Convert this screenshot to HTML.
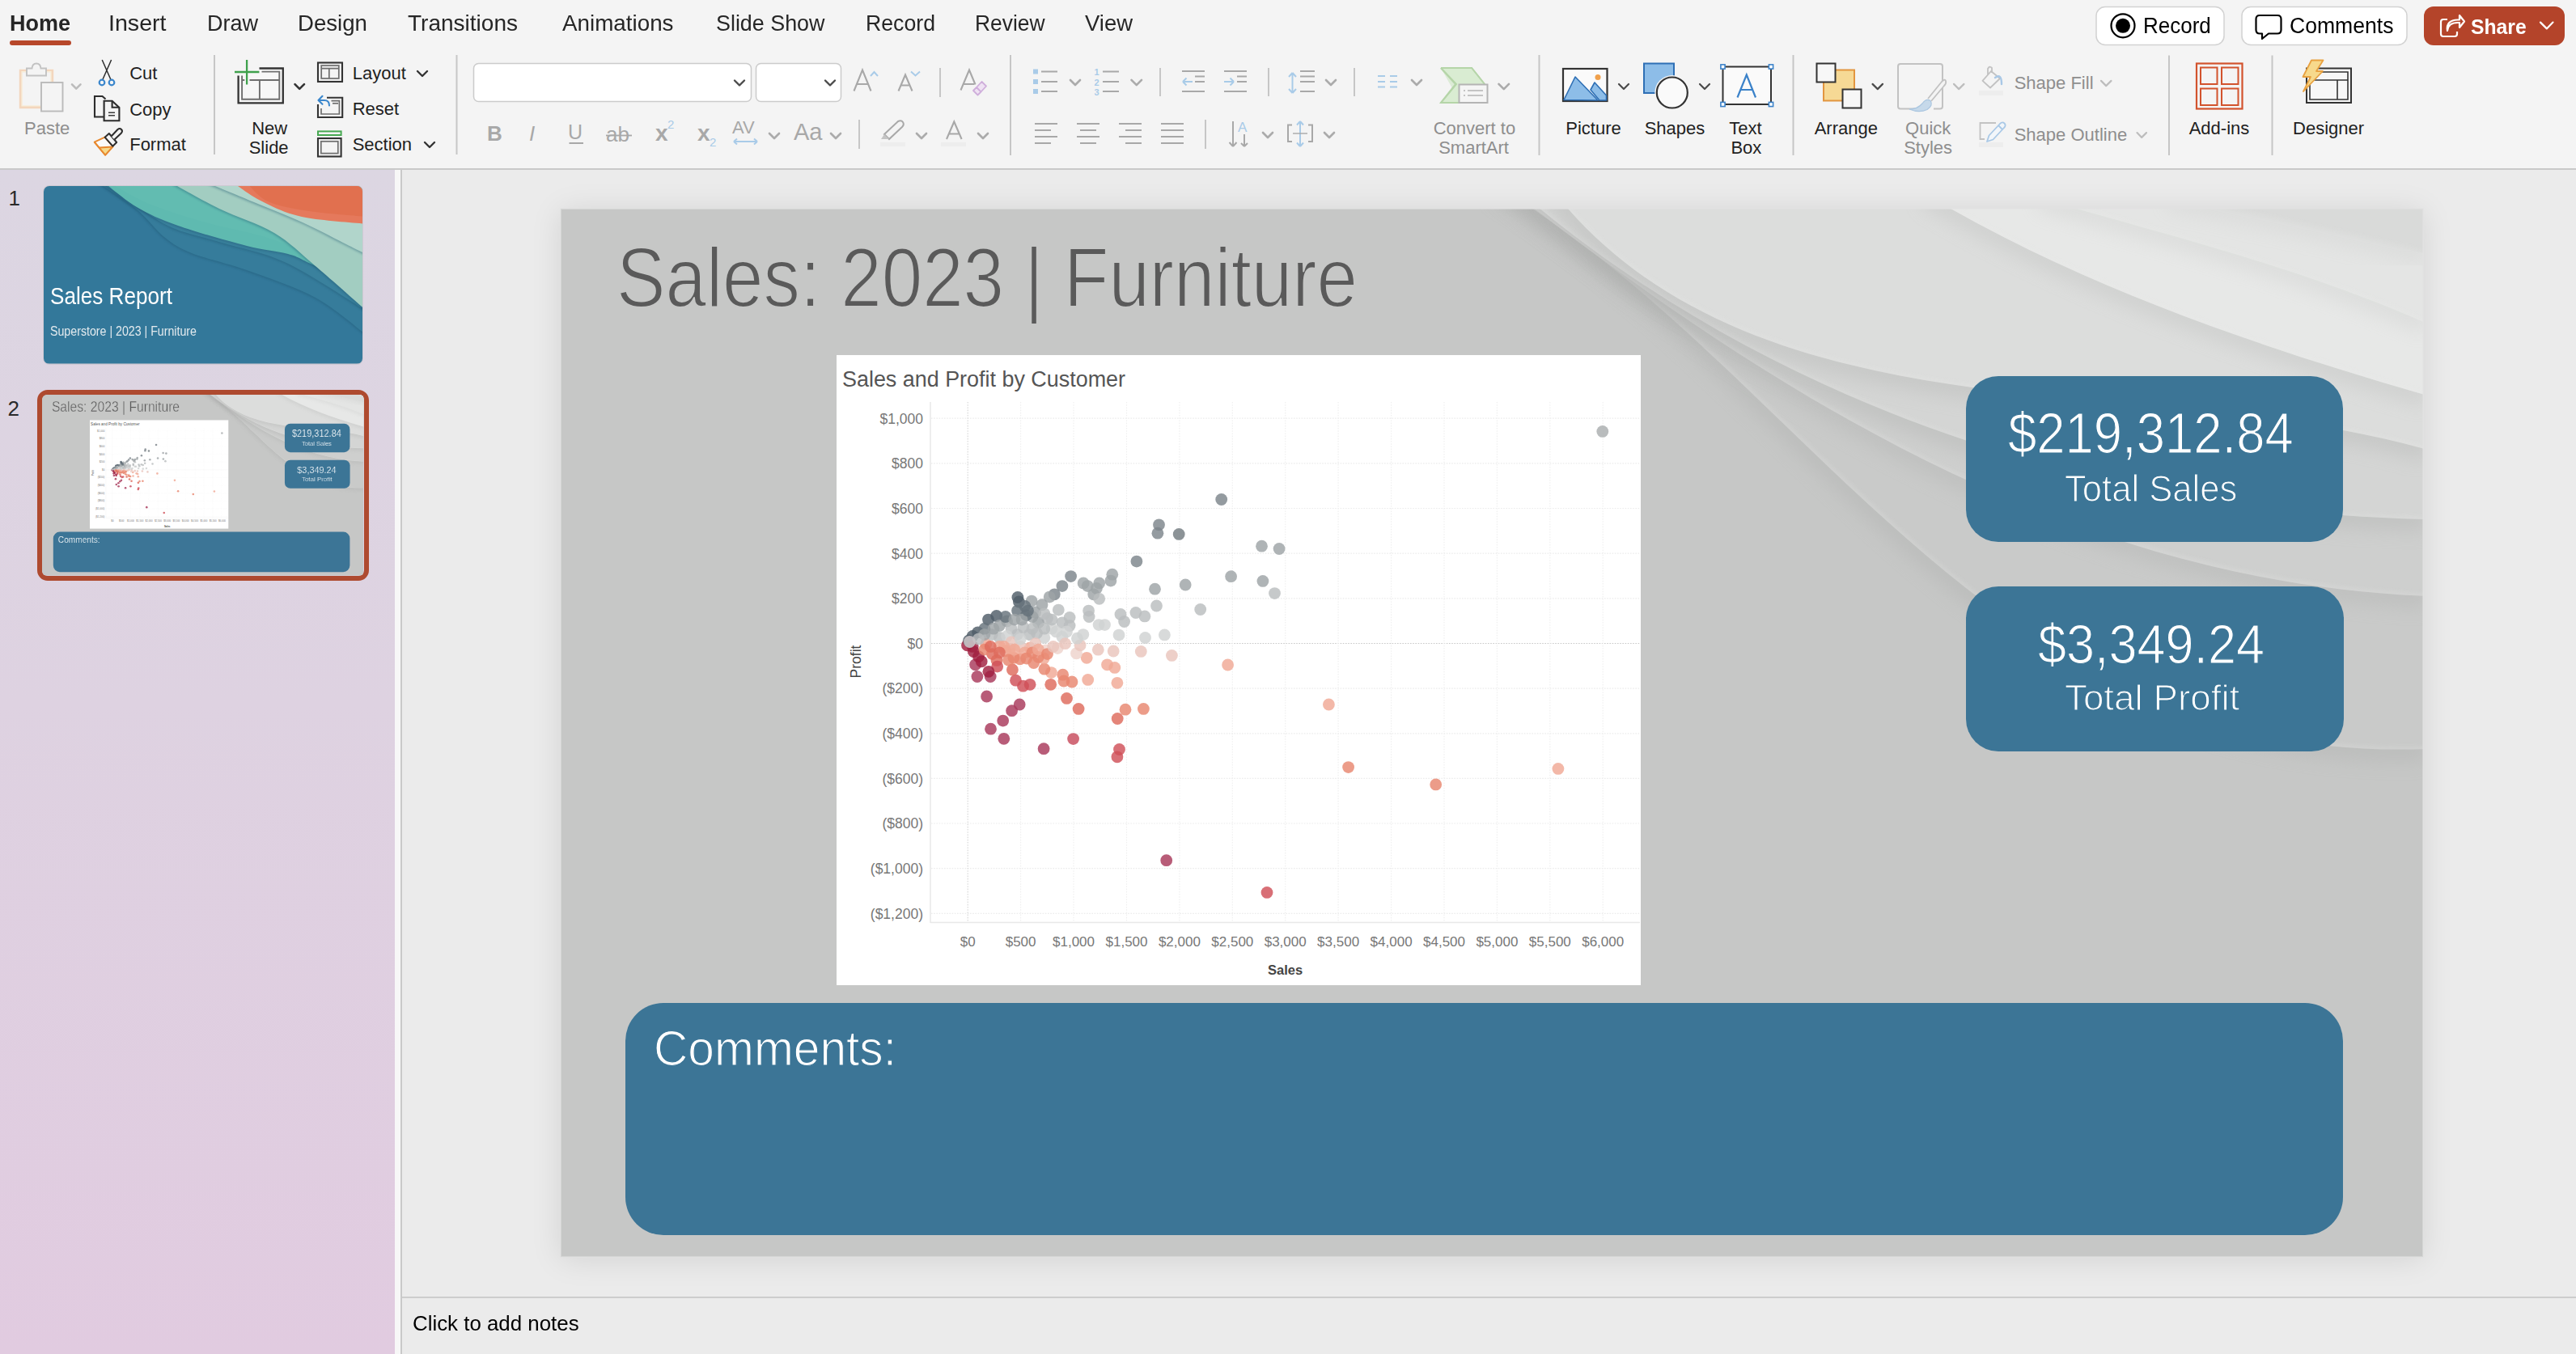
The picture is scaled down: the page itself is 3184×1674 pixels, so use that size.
<!DOCTYPE html>
<html><head><meta charset="utf-8"><title>PowerPoint</title>
<style>
html,body{margin:0;padding:0;}
body{width:3184px;height:1674px;position:relative;overflow:hidden;background:#ebebeb;font-family:"Liberation Sans", sans-serif;}
.a{position:absolute;}
svg{position:absolute;overflow:hidden;}
</style></head><body>
<div class="a" style="left:0;top:0;width:3184px;height:208px;background:#f4f4f4"></div><div class="a" style="left:0;top:208px;width:3184px;height:2px;background:#c9c9c9"></div><div style="position:absolute;left:12.3px;top:15.4px;font-size:28px;line-height:28px;color:#262626;font-weight:600;white-space:nowrap;transform:scaleX(0.9640);transform-origin:0 0;">Home</div><div style="position:absolute;left:133.8px;top:15.4px;font-size:28px;line-height:28px;color:#262626;font-weight:400;white-space:nowrap;transform:scaleX(1.0214);transform-origin:0 0;">Insert</div><div style="position:absolute;left:256.3px;top:15.4px;font-size:28px;line-height:28px;color:#262626;font-weight:400;white-space:nowrap;transform:scaleX(0.9648);transform-origin:0 0;">Draw</div><div style="position:absolute;left:368.3px;top:15.4px;font-size:28px;line-height:28px;color:#262626;font-weight:400;white-space:nowrap;transform:scaleX(0.9862);transform-origin:0 0;">Design</div><div style="position:absolute;left:504.3px;top:15.4px;font-size:28px;line-height:28px;color:#262626;font-weight:400;white-space:nowrap;transform:scaleX(1.0007);transform-origin:0 0;">Transitions</div><div style="position:absolute;left:695.3px;top:15.4px;font-size:28px;line-height:28px;color:#262626;font-weight:400;white-space:nowrap;transform:scaleX(0.9928);transform-origin:0 0;">Animations</div><div style="position:absolute;left:885.3px;top:15.4px;font-size:28px;line-height:28px;color:#262626;font-weight:400;white-space:nowrap;transform:scaleX(0.9600);transform-origin:0 0;">Slide Show</div><div style="position:absolute;left:1069.8px;top:15.4px;font-size:28px;line-height:28px;color:#262626;font-weight:400;white-space:nowrap;transform:scaleX(0.9524);transform-origin:0 0;">Record</div><div style="position:absolute;left:1205.3px;top:15.4px;font-size:28px;line-height:28px;color:#262626;font-weight:400;white-space:nowrap;transform:scaleX(0.9423);transform-origin:0 0;">Review</div><div style="position:absolute;left:1341.3px;top:15.4px;font-size:28px;line-height:28px;color:#262626;font-weight:400;white-space:nowrap;transform:scaleX(0.9801);transform-origin:0 0;">View</div><div class="a" style="left:12px;top:50px;width:76px;height:6px;border-radius:3px;background:#b7472a"></div><svg style="left:0;top:0" width="3184" height="208" viewBox="0 0 3184 208"><path d="M38 87.5 H25.5 V132.5 H50" fill="none" stroke="#f3d6bd" stroke-width="3.4"/><path d="M52 87.5 H64.5 V101" fill="none" stroke="#f3d6bd" stroke-width="3.4"/><path d="M38 88.5 H27 V131 H50 M52 88.5 H63 V101" fill="none" stroke="#f8efd9" stroke-width="1.2"/><path d="M33 93.5 V84.5 H39.5 Q40 78.5 45 78.5 Q50 78.5 50.5 84.5 H57 V93.5 Z" fill="#f4f4f4" stroke="#c2c2c2" stroke-width="1.9"/><rect x="51" y="102" width="26.5" height="35.5" fill="#f4f4f4" stroke="#bababa" stroke-width="1.9"/><polyline points="89,104.4 94.2,109.6 99.5,104.4" fill="none" stroke="#bcbcbc" stroke-width="2.6" stroke-linecap="round" stroke-linejoin="round"/><path d="M126.2 74 L137.2 99 M137.6 74 L126.6 99" stroke="#2d2d2d" stroke-width="1.5" fill="none"/><circle cx="126" cy="102" r="3.3" fill="#f4f4f4" stroke="#3a86cc" stroke-width="2.2"/><circle cx="138" cy="102" r="3.3" fill="#f4f4f4" stroke="#3a86cc" stroke-width="2.2"/><path d="M128.5 144.5 H117 V119 H126.5 L130.5 122.5" fill="none" stroke="#2d2d2d" stroke-width="2.1"/><path d="M128.6 124.8 H138.6 L147.4 133 V149.3 H128.6 Z" fill="#f4f4f4" stroke="#2d2d2d" stroke-width="2.1" stroke-linejoin="miter"/><path d="M138.6 124.8 V132.8 H147.4" fill="none" stroke="#2d2d2d" stroke-width="2.1"/><path d="M134 139.3 H142 M134 142.8 H142" stroke="#3a3a3a" stroke-width="1.5"/><path d="M116.7 175.7 L129.6 169.7 L139.6 181.2 L130.1 191.6 Z" fill="#fafafa" stroke="#e8892f" stroke-width="2" stroke-linejoin="round"/><path d="M123 182.5 L139 181.5 L130.1 191 Z" fill="#f6d98a"/><path d="M116.7 175.7 L130.1 191.6 L139.6 181.2 M123 182.5 L139 181.5" fill="none" stroke="#e8892f" stroke-width="2" stroke-linejoin="round"/><path d="M129.6 169.7 L134.8 165 L144.2 176 L139.3 180.7 Z" fill="#f4f4f4" stroke="#2d2d2d" stroke-width="2" stroke-linejoin="round"/><path d="M137.5 168.5 L145.5 160 Q148 158 150 160 Q152 162 150 164.5 L141.5 172.5" fill="#f4f4f4" stroke="#2d2d2d" stroke-width="2" stroke-linejoin="round"/><line x1="265" y1="68" x2="265" y2="191" stroke="#c6c6c6" stroke-width="2"/><path d="M320.5 84.5 H349.8 V127.3 H294.6 V93.5" fill="#f7f7f7" stroke="#333" stroke-width="2.3"/><path d="M323.5 88.6 H345.3 V122.8 H299.1 V93.5" fill="none" stroke="#6e6e6e" stroke-width="1.9"/><path d="M299.5 99 H302.3 M308.5 99 H345 M320.9 99 V122.5" stroke="#6e6e6e" stroke-width="1.9" fill="none"/><path d="M290 89 H320.4 M305.1 74 V104.4" stroke="#3fa14c" stroke-width="2.3"/><polyline points="364.5,104.1 370.2,109.9 376,104.1" fill="none" stroke="#333" stroke-width="2.6" stroke-linecap="round" stroke-linejoin="round"/><rect x="393" y="77.5" width="30" height="23.5" fill="none" stroke="#333" stroke-width="2.1"/><rect x="397.2" y="81" width="21.6" height="16" fill="none" stroke="#6e6e6e" stroke-width="1.7"/><path d="M397.2 84.6 H418.8 M406.8 84.6 V97" stroke="#6e6e6e" stroke-width="1.7"/><polyline points="516,88.0 522.0,94.0 528,88.0" fill="none" stroke="#333" stroke-width="2.4" stroke-linecap="round" stroke-linejoin="round"/><path d="M404 120.8 H423.2 V145 H393 V129" fill="none" stroke="#333" stroke-width="2.1"/><path d="M409.5 124.6 H419.4 V141 H397 V134" fill="none" stroke="#6e6e6e" stroke-width="1.7"/><path d="M411 127.8 H418" stroke="#6e6e6e" stroke-width="1.7"/><path d="M398.5 118.8 L393.5 124 L398.5 128.8 M394 124 H401 Q407 124 407 130.5" fill="none" stroke="#3a86cc" stroke-width="2.1" stroke-linecap="round" stroke-linejoin="round"/><rect x="393" y="162.4" width="28.6" height="4.6" fill="#f4f4f4" stroke="#46a851" stroke-width="2"/><rect x="393" y="171" width="28.6" height="22.5" fill="none" stroke="#333" stroke-width="2.1"/><rect x="396.8" y="174.8" width="21" height="14.8" fill="none" stroke="#6e6e6e" stroke-width="1.7"/><polyline points="525,176.0 531.0,182.0 537,176.0" fill="none" stroke="#333" stroke-width="2.4" stroke-linecap="round" stroke-linejoin="round"/><line x1="564.5" y1="68" x2="564.5" y2="191" stroke="#c6c6c6" stroke-width="2"/><rect x="585.5" y="78.5" width="343" height="47" rx="6" fill="#ffffff" stroke="#cbcbcb" stroke-width="1.5"/><polyline points="908,99.5 914.0,105.5 920,99.5" fill="none" stroke="#4a4a4a" stroke-width="2.4" stroke-linecap="round" stroke-linejoin="round"/><rect x="934.5" y="78.5" width="105" height="47" rx="6" fill="#ffffff" stroke="#cbcbcb" stroke-width="1.5"/><polyline points="1020,99.5 1026.0,105.5 1032,99.5" fill="none" stroke="#4a4a4a" stroke-width="2.4" stroke-linecap="round" stroke-linejoin="round"/><path d="M1055.5 112.5 L1066 86.5 L1076.5 112.5 M1059 104 H1073" fill="none" stroke="#a8a8a8" stroke-width="2.1"/><polyline points="1076,94 1080.5,89 1085,94" fill="none" stroke="#a9cbe8" stroke-width="2"/><path d="M1110.5 112.5 L1119 92.5 L1127.5 112.5 M1113.3 105.5 H1124.7" fill="none" stroke="#a8a8a8" stroke-width="2.1"/><polyline points="1126,88.5 1131.5,93.5 1137,88.5" fill="none" stroke="#a9cbe8" stroke-width="2"/><line x1="1162" y1="84" x2="1162" y2="120" stroke="#c6c6c6" stroke-width="2"/><path d="M1187.5 111.5 L1198 86.5 L1205.5 104.5 M1191 104 H1204" fill="none" stroke="#a8a8a8" stroke-width="2.1"/><path d="M1207 108 L1213.5 101 L1219 106.5 L1212.5 113.5 Z M1203 112 L1207 108 L1212.5 113.5 L1208.5 117.5 Z" fill="#efe2f3" stroke="#cfaedb" stroke-width="1.8" stroke-linejoin="round"/><line x1="1249" y1="68" x2="1249" y2="192" stroke="#c6c6c6" stroke-width="2"/><text x="602" y="174" font-size="26" fill="#a8a8a8" font-weight="700" text-anchor="start" font-family="Liberation Sans" >B</text><text x="654" y="174" font-size="26" fill="#a8a8a8" font-weight="400" text-anchor="start" font-family="Liberation Sans" font-style="italic">I</text><text x="702" y="172" font-size="25" fill="#a8a8a8" font-weight="400" text-anchor="start" font-family="Liberation Sans" >U</text><line x1="703.5" y1="177" x2="721" y2="177" stroke="#a8a8a8" stroke-width="2"/><text x="749" y="175" font-size="26" fill="#a8a8a8" font-weight="400" text-anchor="start" font-family="Liberation Sans" >ab</text><line x1="749" y1="167.5" x2="781" y2="167.5" stroke="#a8a8a8" stroke-width="1.8"/><text x="810" y="174" font-size="28" fill="#a8a8a8" font-weight="700" text-anchor="start" font-family="Liberation Sans" >x</text><text x="825" y="159" font-size="15" fill="#a9cbe8" font-weight="400" text-anchor="start" font-family="Liberation Sans" >2</text><text x="862" y="174" font-size="28" fill="#a8a8a8" font-weight="700" text-anchor="start" font-family="Liberation Sans" >x</text><text x="877" y="181" font-size="15" fill="#a9cbe8" font-weight="400" text-anchor="start" font-family="Liberation Sans" >2</text><text x="905" y="165" font-size="22" fill="#a8a8a8" font-weight="400" text-anchor="start" font-family="Liberation Sans" >AV</text><path d="M907 175 H936 M907 175 L911 171.5 M907 175 L911 178.5 M936 175 L932 171.5 M936 175 L932 178.5" fill="none" stroke="#a9cbe8" stroke-width="2"/><polyline points="951,165.0 957.0,171.0 963,165.0" fill="none" stroke="#ababab" stroke-width="2.7" stroke-linecap="round" stroke-linejoin="round"/><text x="981" y="173" font-size="29" fill="#a8a8a8" font-weight="400" text-anchor="start" font-family="Liberation Sans" >Aa</text><polyline points="1027,165.0 1033.0,171.0 1039,165.0" fill="none" stroke="#ababab" stroke-width="2.7" stroke-linecap="round" stroke-linejoin="round"/><line x1="1062" y1="148" x2="1062" y2="184" stroke="#c6c6c6" stroke-width="2"/><path d="M1093 166 L1110 150 Q1114 148 1116 151 Q1118 154 1115 157 L1099 172 Z" fill="none" stroke="#a8a8a8" stroke-width="2"/><path d="M1089 172 L1093 166 L1099 172 Z" fill="#c4c4c4"/><rect x="1088" y="176" width="31" height="5" fill="#ededed"/><polyline points="1133,165.0 1139.0,171.0 1145,165.0" fill="none" stroke="#ababab" stroke-width="2.7" stroke-linecap="round" stroke-linejoin="round"/><path d="M1170 172 L1179.3 150.5 L1188.6 172 M1173 165.5 H1185.6" fill="none" stroke="#a8a8a8" stroke-width="2.1"/><rect x="1163" y="176" width="31" height="5" fill="#ededed"/><polyline points="1209,165.0 1215.0,171.0 1221,165.0" fill="none" stroke="#ababab" stroke-width="2.7" stroke-linecap="round" stroke-linejoin="round"/><line x1="1249" y1="68" x2="1249" y2="192" stroke="#c6c6c6" stroke-width="2"/><rect x="1277" y="85.5" width="6" height="6" fill="#a9cbe8"/><line x1="1287" y1="88.5" x2="1307" y2="88.5" stroke="#a8a8a8" stroke-width="2"/><text x="1352.5" y="93.0" font-size="11" fill="#a9cbe8" font-weight="700" text-anchor="start" font-family="Liberation Sans" >1</text><line x1="1363" y1="88.5" x2="1383" y2="88.5" stroke="#a8a8a8" stroke-width="2"/><rect x="1277" y="98" width="6" height="6" fill="#a9cbe8"/><line x1="1287" y1="101" x2="1307" y2="101" stroke="#a8a8a8" stroke-width="2"/><text x="1352.5" y="105.5" font-size="11" fill="#a9cbe8" font-weight="700" text-anchor="start" font-family="Liberation Sans" >2</text><line x1="1363" y1="101" x2="1383" y2="101" stroke="#a8a8a8" stroke-width="2"/><rect x="1277" y="110" width="6" height="6" fill="#a9cbe8"/><line x1="1287" y1="113" x2="1307" y2="113" stroke="#a8a8a8" stroke-width="2"/><text x="1352.5" y="117.5" font-size="11" fill="#a9cbe8" font-weight="700" text-anchor="start" font-family="Liberation Sans" >3</text><line x1="1363" y1="113" x2="1383" y2="113" stroke="#a8a8a8" stroke-width="2"/><polyline points="1323,99.0 1329.0,105.0 1335,99.0" fill="none" stroke="#ababab" stroke-width="2.7" stroke-linecap="round" stroke-linejoin="round"/><polyline points="1398.5,98.9 1404.8,105.1 1411,98.9" fill="none" stroke="#ababab" stroke-width="2.7" stroke-linecap="round" stroke-linejoin="round"/><line x1="1434" y1="84" x2="1434" y2="119" stroke="#c6c6c6" stroke-width="2"/><path d="M1461 88 H1489 M1477 94.5 H1489 M1477 101 H1489 M1461 113 H1489" stroke="#a8a8a8" stroke-width="2"/><path d="M1462 101 H1474 M1462 101 L1466.5 96.5 M1462 101 L1466.5 105.5" stroke="#a9cbe8" stroke-width="2" fill="none"/><path d="M1513 88 H1541 M1529 94.5 H1541 M1529 101 H1541 M1513 113 H1541" stroke="#a8a8a8" stroke-width="2"/><path d="M1513 101 H1525 M1525 101 L1520.5 96.5 M1525 101 L1520.5 105.5" stroke="#a9cbe8" stroke-width="2" fill="none"/><line x1="1568" y1="84" x2="1568" y2="119" stroke="#c6c6c6" stroke-width="2"/><path d="M1597.5 90 V115 M1597.5 90 L1593 95 M1597.5 90 L1602 95 M1597.5 115 L1593 110 M1597.5 115 L1602 110" stroke="#a9cbe8" stroke-width="2" fill="none"/><path d="M1607 88 H1625 M1607 94.5 H1625 M1607 101 H1625 M1607 113 H1625" stroke="#a8a8a8" stroke-width="2"/><polyline points="1639,99.0 1645.0,105.0 1651,99.0" fill="none" stroke="#ababab" stroke-width="2.7" stroke-linecap="round" stroke-linejoin="round"/><line x1="1674" y1="84" x2="1674" y2="119" stroke="#c6c6c6" stroke-width="2"/><path d="M1703 94 H1712 M1703 101 H1712 M1703 107.5 H1712 M1718 94 H1727 M1718 101 H1727 M1718 107.5 H1727" stroke="#a9cbe8" stroke-width="2"/><polyline points="1745,99.0 1751.0,105.0 1757,99.0" fill="none" stroke="#ababab" stroke-width="2.7" stroke-linecap="round" stroke-linejoin="round"/><path d="M1781 84 H1819 L1835 104 H1820 L1819 104 M1781 84 L1799 104 L1781 127 H1805" fill="#dcebd6" stroke="#b9d7ae" stroke-width="2" stroke-linejoin="round"/><path d="M1781 84 H1819 L1834 104 L1800 104 Z M1800 104 L1781 127 H1803 V104 Z" fill="#d9ecd2" stroke="none"/><polyline points="1781,84 1819,84 1835,104" fill="none" stroke="#b5d5a8" stroke-width="2"/><polyline points="1781,84 1800,104 1781,127 1803,127" fill="none" stroke="#b5d5a8" stroke-width="2"/><rect x="1803.5" y="104.5" width="35" height="22.5" fill="#f5f5f5" stroke="#b4b4b4" stroke-width="2"/><path d="M1809 112 H1811 M1814 112 H1833 M1809 118 H1811 M1814 118 H1833" stroke="#b4b4b4" stroke-width="1.6"/><polyline points="1852.5,103.9 1858.8,110.1 1865,103.9" fill="none" stroke="#ababab" stroke-width="2.7" stroke-linecap="round" stroke-linejoin="round"/><line x1="1902.5" y1="68" x2="1902.5" y2="192" stroke="#c6c6c6" stroke-width="2"/><line x1="1279" y1="153" x2="1307" y2="153" stroke="#a8a8a8" stroke-width="2"/><line x1="1279" y1="161" x2="1299" y2="161" stroke="#a8a8a8" stroke-width="2"/><line x1="1279" y1="169" x2="1307" y2="169" stroke="#a8a8a8" stroke-width="2"/><line x1="1279" y1="177" x2="1299" y2="177" stroke="#a8a8a8" stroke-width="2"/><line x1="1331.0" y1="153" x2="1359.0" y2="153" stroke="#a8a8a8" stroke-width="2"/><line x1="1335.0" y1="161" x2="1355.0" y2="161" stroke="#a8a8a8" stroke-width="2"/><line x1="1331.0" y1="169" x2="1359.0" y2="169" stroke="#a8a8a8" stroke-width="2"/><line x1="1335.0" y1="177" x2="1355.0" y2="177" stroke="#a8a8a8" stroke-width="2"/><line x1="1383" y1="153" x2="1411" y2="153" stroke="#a8a8a8" stroke-width="2"/><line x1="1391" y1="161" x2="1411" y2="161" stroke="#a8a8a8" stroke-width="2"/><line x1="1383" y1="169" x2="1411" y2="169" stroke="#a8a8a8" stroke-width="2"/><line x1="1391" y1="177" x2="1411" y2="177" stroke="#a8a8a8" stroke-width="2"/><line x1="1435" y1="153" x2="1463" y2="153" stroke="#a8a8a8" stroke-width="2"/><line x1="1435" y1="161" x2="1463" y2="161" stroke="#a8a8a8" stroke-width="2"/><line x1="1435" y1="169" x2="1463" y2="169" stroke="#a8a8a8" stroke-width="2"/><line x1="1435" y1="177" x2="1463" y2="177" stroke="#a8a8a8" stroke-width="2"/><line x1="1490" y1="148" x2="1490" y2="184" stroke="#c6c6c6" stroke-width="2"/><path d="M1524 150 V181 M1524 181 L1519.5 176 M1524 181 L1528.5 176" stroke="#a8a8a8" stroke-width="2" fill="none"/><text x="1530" y="163" font-size="17" fill="#a9cbe8" font-weight="400" text-anchor="start" font-family="Liberation Sans" >A</text><path d="M1538 166 V181 M1538 181 L1534 177 M1538 181 L1542 177" stroke="#a8a8a8" stroke-width="2" fill="none"/><polyline points="1561,164.0 1567.0,170.0 1573,164.0" fill="none" stroke="#ababab" stroke-width="2.7" stroke-linecap="round" stroke-linejoin="round"/><path d="M1597 154.5 H1592 V175 H1597 M1617 154.5 H1622 V175 H1617" stroke="#a8a8a8" stroke-width="2" fill="none"/><path d="M1607 150 V181 M1607 150 L1603 154.5 M1607 150 L1611 154.5 M1607 181 L1603 176.5 M1607 181 L1611 176.5" stroke="#a9cbe8" stroke-width="2" fill="none"/><line x1="1598" y1="165" x2="1616" y2="165" stroke="#a8a8a8" stroke-width="1.4"/><polyline points="1637,164.0 1643.0,170.0 1649,164.0" fill="none" stroke="#ababab" stroke-width="2.7" stroke-linecap="round" stroke-linejoin="round"/><rect x="1932" y="85" width="54.5" height="40" fill="#fafafa" stroke="#333" stroke-width="2.2"/><path d="M1933 123.5 L1947 95 L1975 124 Z" fill="#8dbde8" stroke="#2e6fb5" stroke-width="1.6" stroke-linejoin="round"/><path d="M1966 111 L1971 102 L1985.5 118 V124 H1977 Z" fill="#8dbde8" stroke="#2e6fb5" stroke-width="1.6" stroke-linejoin="round"/><circle cx="1975" cy="95.5" r="3.5" fill="#f0a04b"/><polyline points="2001,104.0 2007.0,110.0 2013,104.0" fill="none" stroke="#4a4a4a" stroke-width="2.2" stroke-linecap="round" stroke-linejoin="round"/><rect x="2032" y="78.5" width="37" height="36.5" fill="#8dbde8" stroke="#2e6fb5" stroke-width="2"/><circle cx="2066.8" cy="114.5" r="21.5" fill="#f4f4f4"/><circle cx="2066.8" cy="114.5" r="19" fill="#fafafa" stroke="#333" stroke-width="2.2"/><polyline points="2101,104.0 2107.0,110.0 2113,104.0" fill="none" stroke="#4a4a4a" stroke-width="2.2" stroke-linecap="round" stroke-linejoin="round"/><rect x="2129.5" y="82.5" width="59.5" height="46.5" fill="#fafafa" stroke="#333" stroke-width="2"/><rect x="2126.9" y="79.9" width="5.2" height="5.2" fill="#fff" stroke="#3b82c9" stroke-width="1.6"/><rect x="2186.4" y="79.9" width="5.2" height="5.2" fill="#fff" stroke="#3b82c9" stroke-width="1.6"/><rect x="2126.9" y="126.4" width="5.2" height="5.2" fill="#fff" stroke="#3b82c9" stroke-width="1.6"/><rect x="2186.4" y="126.4" width="5.2" height="5.2" fill="#fff" stroke="#3b82c9" stroke-width="1.6"/><path d="M2147.5 120.5 L2158.8 92.5 L2170 120.5 M2151.5 111 H2166" fill="none" stroke="#3b82c9" stroke-width="2.2"/><line x1="2216.5" y1="68" x2="2216.5" y2="192" stroke="#c6c6c6" stroke-width="2"/><rect x="2254" y="86.5" width="38" height="38" fill="#f6d995" stroke="#e2953f" stroke-width="2"/><rect x="2245.5" y="78.5" width="23" height="23" fill="#f7f7f7" stroke="#333" stroke-width="2"/><rect x="2277.5" y="110.5" width="23" height="23" fill="#f7f7f7" stroke="#333" stroke-width="2"/><polyline points="2314.5,103.9 2320.8,110.1 2327,103.9" fill="none" stroke="#4a4a4a" stroke-width="2.2" stroke-linecap="round" stroke-linejoin="round"/><path d="M2372 134.5 H2349 Q2346 134.5 2346 131.5 V82 Q2346 79 2349 79 H2398 Q2401 79 2401 82 V131.5 Q2401 134.5 2398 134.5 H2390" fill="none" stroke="#c2c2c2" stroke-width="2"/><path d="M2383 122 L2400 101 Q2404 97 2405 100 Q2406 103 2403 106 L2387 125" fill="#f4f4f4" stroke="#c2c2c2" stroke-width="1.8"/><path d="M2360 135 Q2370 135 2376 128 Q2381 121 2386 124.5 Q2390 130 2382 135.5 Q2372 140 2360 135 Z" fill="#c6d9ea" stroke="#aac6e0" stroke-width="1.2"/><polyline points="2415,103.9 2421.2,110.1 2427.5,103.9" fill="none" stroke="#bdbdbd" stroke-width="2.2" stroke-linecap="round" stroke-linejoin="round"/><path d="M2450.5 99.8 L2461 88 L2472 97 L2460 108.5 Z" fill="none" stroke="#c2c2c2" stroke-width="1.8" stroke-linejoin="round"/><path d="M2457 92 V85 Q2459 81 2462 84 V90" fill="none" stroke="#c2c2c2" stroke-width="1.8"/><path d="M2466 96 Q2474 90 2474 104" fill="none" stroke="#a9c8e6" stroke-width="2.4" stroke-linecap="round"/><rect x="2446" y="112" width="30" height="6" fill="#ededed"/><polyline points="2597,99.9 2603.2,106.1 2609.5,99.9" fill="none" stroke="#bdbdbd" stroke-width="2.2" stroke-linecap="round" stroke-linejoin="round"/><path d="M2467 152 H2447.5 V172 H2453" fill="none" stroke="#c2c2c2" stroke-width="1.8"/><path d="M2456 175 L2458.5 167.5 L2472 153 Q2475 150 2477.5 152.5 Q2480 155 2477 158 L2463.5 172.5 Z M2470 155 L2475.5 160.5" fill="#f2f6fa" stroke="#a9c8e6" stroke-width="1.8" stroke-linejoin="round"/><rect x="2446" y="176" width="30" height="6" fill="#ededed"/><polyline points="2641.5,164.1 2647.2,169.9 2653,164.1" fill="none" stroke="#bdbdbd" stroke-width="2.2" stroke-linecap="round" stroke-linejoin="round"/><line x1="2681" y1="68.5" x2="2681" y2="192" stroke="#c6c6c6" stroke-width="2"/><rect x="2715" y="78.5" width="56.5" height="56" fill="none" stroke="#d2532d" stroke-width="2.2"/><rect x="2720" y="83.5" width="20.5" height="20.5" fill="none" stroke="#d2532d" stroke-width="2"/><rect x="2746" y="83.5" width="20.5" height="20.5" fill="none" stroke="#d2532d" stroke-width="2"/><rect x="2720" y="109.5" width="20.5" height="20.5" fill="none" stroke="#d2532d" stroke-width="2"/><rect x="2746" y="109.5" width="20.5" height="20.5" fill="none" stroke="#d2532d" stroke-width="2"/><line x1="2808.5" y1="68.5" x2="2808.5" y2="192" stroke="#c6c6c6" stroke-width="2"/><rect x="2851" y="84.5" width="55" height="42.5" fill="#f7f7f7" stroke="#333" stroke-width="2"/><path d="M2855 89 H2902 V123 H2855 Z M2855 99 H2902 M2889 99 V123" fill="none" stroke="#333" stroke-width="1.6"/><path d="M2857 74.5 H2871.5 L2863 88 H2871 L2847 113 L2856 95 H2846.5 Z" fill="#f7d98c" stroke="#e8a140" stroke-width="1.8" stroke-linejoin="round"/><rect x="2591" y="8.5" width="158" height="47" rx="11" fill="#ffffff" stroke="#d2d2d2" stroke-width="1.5"/><circle cx="2624" cy="31.8" r="14.5" fill="none" stroke="#000" stroke-width="2.2"/><circle cx="2624" cy="31.8" r="9" fill="#000"/><rect x="2771" y="8.5" width="204" height="47" rx="11" fill="#ffffff" stroke="#d2d2d2" stroke-width="1.5"/><path d="M2793 19 H2815 Q2819.5 19 2819.5 23.5 V37 Q2819.5 41.5 2815 41.5 H2804 L2796 48 V41.5 H2793 Q2788.5 41.5 2788.5 37 V23.5 Q2788.5 19 2793 19 Z" fill="none" stroke="#000" stroke-width="2.2" stroke-linejoin="round"/><rect x="2996" y="8" width="174" height="48" rx="12" fill="#b4442a"/><path d="M3025 24 H3020 Q3017 24 3017 27 V42 Q3017 45 3020 45 H3034 Q3037 45 3037 42 V39" fill="none" stroke="#fff" stroke-width="2.2" stroke-linejoin="round"/><path d="M3025 38 Q3026 28 3038 28 H3040 V34 L3046 26.5 L3040 19 V24.5 H3038 Q3023 25 3025 38 Z" fill="none" stroke="#fff" stroke-width="2.2" stroke-linejoin="round"/><polyline points="3140,27.6 3147.8,35.4 3155.5,27.6" fill="none" stroke="#ffffff" stroke-width="2.2" stroke-linecap="round" stroke-linejoin="round"/></svg><div style="position:absolute;left:30.1px;top:148.3px;font-size:22px;line-height:22px;color:#8e8e8e;font-weight:400;white-space:nowrap;">Paste</div><div style="position:absolute;left:160.2px;top:80.3px;font-size:22px;line-height:22px;color:#1f1f1f;font-weight:400;white-space:nowrap;">Cut</div><div style="position:absolute;left:160.2px;top:125.3px;font-size:22px;line-height:22px;color:#1f1f1f;font-weight:400;white-space:nowrap;">Copy</div><div style="position:absolute;left:160.2px;top:168.3px;font-size:22px;line-height:22px;color:#1f1f1f;font-weight:400;white-space:nowrap;">Format</div><div style="position:absolute;left:311.2px;top:148.3px;font-size:22px;line-height:22px;color:#1f1f1f;font-weight:400;white-space:nowrap;">New</div><div style="position:absolute;left:307.7px;top:171.8px;font-size:22px;line-height:22px;color:#1f1f1f;font-weight:400;white-space:nowrap;">Slide</div><div style="position:absolute;left:435.7px;top:80.3px;font-size:22px;line-height:22px;color:#1f1f1f;font-weight:400;white-space:nowrap;">Layout</div><div style="position:absolute;left:435.7px;top:123.8px;font-size:22px;line-height:22px;color:#1f1f1f;font-weight:400;white-space:nowrap;">Reset</div><div style="position:absolute;left:435.7px;top:168.3px;font-size:22px;line-height:22px;color:#1f1f1f;font-weight:400;white-space:nowrap;">Section</div><div style="position:absolute;left:1771.7px;top:147.9px;font-size:22px;line-height:22px;color:#8e8e8e;font-weight:400;white-space:nowrap;">Convert to</div><div style="position:absolute;left:1778.2px;top:171.7px;font-size:22px;line-height:22px;color:#8e8e8e;font-weight:400;white-space:nowrap;">SmartArt</div><div style="position:absolute;left:1935.3px;top:147.9px;font-size:22px;line-height:22px;color:#1f1f1f;font-weight:400;white-space:nowrap;">Picture</div><div style="position:absolute;left:2032.7px;top:147.9px;font-size:22px;line-height:22px;color:#1f1f1f;font-weight:400;white-space:nowrap;">Shapes</div><div style="position:absolute;left:2137.3px;top:147.9px;font-size:22px;line-height:22px;color:#1f1f1f;font-weight:400;white-space:nowrap;">Text</div><div style="position:absolute;left:2139.4px;top:171.7px;font-size:22px;line-height:22px;color:#1f1f1f;font-weight:400;white-space:nowrap;">Box</div><div style="position:absolute;left:2242.7px;top:147.9px;font-size:22px;line-height:22px;color:#1f1f1f;font-weight:400;white-space:nowrap;">Arrange</div><div style="position:absolute;left:2355.1px;top:147.9px;font-size:22px;line-height:22px;color:#8e8e8e;font-weight:400;white-space:nowrap;">Quick</div><div style="position:absolute;left:2353.2px;top:171.7px;font-size:22px;line-height:22px;color:#8e8e8e;font-weight:400;white-space:nowrap;">Styles</div><div style="position:absolute;left:2489.7px;top:91.7px;font-size:22px;line-height:22px;color:#8e8e8e;font-weight:400;white-space:nowrap;">Shape Fill</div><div style="position:absolute;left:2489.7px;top:156.3px;font-size:22px;line-height:22px;color:#8e8e8e;font-weight:400;white-space:nowrap;">Shape Outline</div><div style="position:absolute;left:2705.7px;top:148.3px;font-size:22px;line-height:22px;color:#1f1f1f;font-weight:400;white-space:nowrap;">Add-ins</div><div style="position:absolute;left:2834.1px;top:148.3px;font-size:22px;line-height:22px;color:#1f1f1f;font-weight:400;white-space:nowrap;">Designer</div><div style="position:absolute;left:2649.4px;top:19.3px;font-size:27px;line-height:27px;color:#000000;font-weight:400;white-space:nowrap;transform:scaleX(0.9621);transform-origin:0 0;">Record</div><div style="position:absolute;left:2829.8px;top:19.3px;font-size:27px;line-height:27px;color:#000000;font-weight:400;white-space:nowrap;transform:scaleX(0.9839);transform-origin:0 0;">Comments</div><div style="position:absolute;left:3054.4px;top:20.1px;font-size:26px;line-height:26px;color:#ffffff;font-weight:700;white-space:nowrap;transform:scaleX(0.9502);transform-origin:0 0;">Share</div><div class="a" style="left:0;top:210px;width:488px;height:1464px;background:linear-gradient(180deg,#dcd6e2 0%,#ded2e1 45%,#e1cbe0 100%)"></div><div class="a" style="left:488px;top:210px;width:7px;height:1464px;background:#f7f7f7"></div><div class="a" style="left:495px;top:210px;width:2px;height:1464px;background:#c9c9c9"></div><div style="position:absolute;left:10.4px;top:231.9px;font-size:26px;line-height:26px;color:#2a2a2a;font-weight:400;white-space:nowrap;">1</div><div style="position:absolute;left:9.4px;top:492.3px;font-size:26px;line-height:26px;color:#2a2a2a;font-weight:400;white-space:nowrap;">2</div><div class="a" style="left:52.7px;top:229.1px;width:396.2px;height:221.5px;border-radius:8px;background:#cfc9d3"></div><div class="a" style="left:53.7px;top:230.1px;width:394.2px;height:219.5px;border-radius:7px;overflow:hidden"><svg style="left:0;top:0" width="394.2" height="219.5" viewBox="0 0 394.2 219.5"><defs><filter id="tb2"><feGaussianBlur stdDeviation="1.5"/></filter></defs><rect width="394.2" height="219.5" fill="#33789a"/><path d="M66.0 -5.0 C74.2 0.7 101.2 17.7 115.0 29.0 C128.8 40.3 137.7 54.0 149.0 63.0 C160.3 72.0 166.0 76.2 183.0 83.0 C200.0 89.8 225.5 94.8 251.0 104.0 C276.5 113.2 311.2 124.5 336.0 138.0 C360.8 151.5 389.3 177.2 400.0 185.0" fill="none" stroke="#1f5570" stroke-width="3" opacity="0.45" filter="url(#tb2)"/><path d="M66.0 -5.0 C74.2 0.7 101.2 17.7 115.0 29.0 C128.8 40.3 137.7 54.0 149.0 63.0 C160.3 72.0 166.0 76.2 183.0 83.0 C200.0 89.8 225.5 94.8 251.0 104.0 C276.5 113.2 311.2 124.5 336.0 138.0 C360.8 151.5 389.3 177.2 400.0 185.0 L400 -5 Z" fill="#367c9b"/><path d="M70.0 -5.0 C78.0 0.3 103.0 17.5 118.0 27.0 C133.0 36.5 143.0 44.8 160.0 52.0 C177.0 59.2 196.7 62.8 220.0 70.0 C243.3 77.2 270.0 80.8 300.0 95.0 C330.0 109.2 383.3 145.0 400.0 155.0" fill="none" stroke="#1f5570" stroke-width="3" opacity="0.45" filter="url(#tb2)"/><path d="M70.0 -5.0 C78.0 0.3 103.0 17.5 118.0 27.0 C133.0 36.5 143.0 44.8 160.0 52.0 C177.0 59.2 196.7 62.8 220.0 70.0 C243.3 77.2 270.0 80.8 300.0 95.0 C330.0 109.2 383.3 145.0 400.0 155.0 L400 -5 Z" fill="#3a819d"/><path d="M74.0 -5.0 C80.8 0.2 99.7 17.0 115.0 26.0 C130.3 35.0 143.3 41.0 166.0 49.0 C188.7 57.0 228.3 68.2 251.0 74.0 C273.7 79.8 288.8 80.3 302.0 84.0 C315.2 87.7 313.7 88.3 330.0 96.0 C346.3 103.7 388.3 124.3 400.0 130.0" fill="none" stroke="#1f5570" stroke-width="3" opacity="0.45" filter="url(#tb2)"/><path d="M74.0 -5.0 C80.8 0.2 99.7 17.0 115.0 26.0 C130.3 35.0 143.3 41.0 166.0 49.0 C188.7 57.0 228.3 68.2 251.0 74.0 C273.7 79.8 288.8 80.3 302.0 84.0 C315.2 87.7 313.7 88.3 330.0 96.0 C346.3 103.7 388.3 124.3 400.0 130.0 L400 -5 Z" fill="#5fbab0"/><path d="M80.0 -5.0 C88.3 -0.5 110.0 13.7 130.0 22.0 C150.0 30.3 176.7 38.3 200.0 45.0 C223.3 51.7 250.0 56.2 270.0 62.0 C290.0 67.8 298.3 72.0 320.0 80.0 C341.7 88.0 386.7 105.0 400.0 110.0 L400 -5 Z" fill="#62bcb1"/><path d="M156.0 -5.0 C166.2 0.5 195.5 17.5 217.0 28.0 C238.5 38.5 265.2 46.2 285.0 58.0 C304.8 69.8 316.8 82.8 336.0 99.0 C355.2 115.2 389.3 145.7 400.0 155.0" fill="none" stroke="#1f5570" stroke-width="3" opacity="0.45" filter="url(#tb2)"/><path d="M156.0 -5.0 C166.2 0.5 195.5 17.5 217.0 28.0 C238.5 38.5 265.2 46.2 285.0 58.0 C304.8 69.8 316.8 82.8 336.0 99.0 C355.2 115.2 389.3 145.7 400.0 155.0 L400 -5 Z" fill="#a2cdc1"/><path d="M200.0 -5.0 C210.0 -0.8 240.0 11.7 260.0 20.0 C280.0 28.3 301.7 36.7 320.0 45.0 C338.3 53.3 356.7 63.3 370.0 70.0 C383.3 76.7 395.0 82.5 400.0 85.0" fill="none" stroke="#1f5570" stroke-width="3" opacity="0.45" filter="url(#tb2)"/><path d="M200.0 -5.0 C210.0 -0.8 240.0 11.7 260.0 20.0 C280.0 28.3 301.7 36.7 320.0 45.0 C338.3 53.3 356.7 63.3 370.0 70.0 C383.3 76.7 395.0 82.5 400.0 85.0 L400 -5 Z" fill="#b1d5cb"/><path d="M233.0 -5.0 C238.8 -1.2 253.7 10.8 268.0 18.0 C282.3 25.2 297.0 33.2 319.0 38.0 C341.0 42.8 386.5 45.5 400.0 47.0 L400 -5 Z" fill="#e5795c"/><path d="M250.0 -5.0 C254.5 -1.0 264.0 13.0 277.0 19.0 C290.0 25.0 307.5 27.8 328.0 31.0 C348.5 34.2 388.0 36.8 400.0 38.0 L400 -5 Z" fill="#e1704f"/></svg></div><div style="position:absolute;left:61.6px;top:351.1px;font-size:29.5px;line-height:29.5px;color:#ffffff;font-weight:400;white-space:nowrap;transform:scaleX(0.8856);transform-origin:0 0;">Sales Report</div><div style="position:absolute;left:62.4px;top:402.4px;font-size:16px;line-height:16px;color:#e3eaee;font-weight:400;white-space:nowrap;transform:scaleX(0.8873);transform-origin:0 0;">Superstore | 2023 | Furniture</div><div class="a" style="left:46px;top:482px;width:398px;height:223.5px;border:6px solid #ae4a2f;border-radius:13px;"></div><div class="a" style="left:497px;top:1603px;width:2687px;height:2px;background:#cdcdcd"></div><div style="position:absolute;left:510.4px;top:1622.9px;font-size:26px;line-height:26px;color:#000000;font-weight:400;white-space:nowrap;transform:scaleX(0.9947);transform-origin:0 0;">Click to add notes</div><div class="a" style="left:693px;top:258px;width:2302px;height:1296px;background:#c6c7c6;box-shadow:0 3px 36px rgba(0,0,0,0.10);"></div><div class="a" style="left:0;top:0;width:3184px;height:1674px;pointer-events:none"><svg style="left:693px;top:258px" width="2302" height="1296" viewBox="693 258 2302 1296"><defs><filter id="mbl8" x="-20%" y="-20%" width="140%" height="140%"><feGaussianBlur stdDeviation="12"/></filter><filter id="mbl3" x="-20%" y="-20%" width="140%" height="140%"><feGaussianBlur stdDeviation="3"/></filter><clipPath id="msclip"><rect x="693" y="258" width="2302" height="1296"/></clipPath><clipPath id="mc0"><path d="M1850 230 C2240 464 2450 946 3000 926 L3000 200 L1800 200 Z"/></clipPath><clipPath id="mc1"><path d="M1860 230 C2192 488 2560 720 3000 737 L3000 200 L1800 200 Z"/></clipPath><clipPath id="mc2"><path d="M1870 230 C2180 498 2592 634 3000 642 L3000 200 L1800 200 Z"/></clipPath><clipPath id="mc3"><path d="M1915 230 C2162 552 2666 459 3000 556 L3000 200 L1800 200 Z"/></clipPath><clipPath id="mc4"><path d="M2380 240 C2572 354 2786 427 3000 489 L3000 200 L1800 200 Z"/></clipPath><clipPath id="mc5"><path d="M2520 245 C2682 291 2846 332 3000 400 L3000 200 L1800 200 Z"/></clipPath><clipPath id="mc6"><path d="M2680 245 C2780 265 2900 290 3000 314 L3000 200 L1800 200 Z"/></clipPath></defs><g clip-path="url(#msclip)"><rect x="693" y="258" width="2302" height="1296" fill="#c6c7c6"/><path d="M1850 230 C2240 464 2450 946 3000 926" fill="none" stroke="#a9aaa9" stroke-width="26" filter="url(#mbl8)" opacity="0.38"/><path d="M1850 230 C2240 464 2450 946 3000 926 L3000 200 L1800 200 Z" fill="#c9cac9"/><g clip-path="url(#mc0)"><path d="M1850 230 C2240 464 2450 946 3000 926" fill="none" stroke="#ebecea" stroke-width="5" filter="url(#mbl3)" opacity="0.3"/></g><path d="M1860 230 C2192 488 2560 720 3000 737" fill="none" stroke="#a9aaa9" stroke-width="26" filter="url(#mbl8)" opacity="0.34"/><path d="M1860 230 C2192 488 2560 720 3000 737 L3000 200 L1800 200 Z" fill="#cecfce"/><g clip-path="url(#mc1)"><path d="M1860 230 C2192 488 2560 720 3000 737" fill="none" stroke="#ebecea" stroke-width="5" filter="url(#mbl3)" opacity="0.3"/></g><path d="M1870 230 C2180 498 2592 634 3000 642" fill="none" stroke="#a9aaa9" stroke-width="26" filter="url(#mbl8)" opacity="0.38"/><path d="M1870 230 C2180 498 2592 634 3000 642 L3000 200 L1800 200 Z" fill="#d4d5d4"/><g clip-path="url(#mc2)"><path d="M1870 230 C2180 498 2592 634 3000 642" fill="none" stroke="#ebecea" stroke-width="5" filter="url(#mbl3)" opacity="0.3"/></g><path d="M1915 230 C2162 552 2666 459 3000 556" fill="none" stroke="#a9aaa9" stroke-width="26" filter="url(#mbl8)" opacity="0.34"/><path d="M1915 230 C2162 552 2666 459 3000 556 L3000 200 L1800 200 Z" fill="#dcdddc"/><g clip-path="url(#mc3)"><path d="M1915 230 C2162 552 2666 459 3000 556" fill="none" stroke="#ebecea" stroke-width="5" filter="url(#mbl3)" opacity="0.3"/></g><path d="M2380 240 C2572 354 2786 427 3000 489" fill="none" stroke="#a9aaa9" stroke-width="26" filter="url(#mbl8)" opacity="0.26"/><path d="M2380 240 C2572 354 2786 427 3000 489 L3000 200 L1800 200 Z" fill="#e7e8e7"/><g clip-path="url(#mc4)"><path d="M2380 240 C2572 354 2786 427 3000 489" fill="none" stroke="#ebecea" stroke-width="5" filter="url(#mbl3)" opacity="0.3"/></g><path d="M2520 245 C2682 291 2846 332 3000 400" fill="none" stroke="#a9aaa9" stroke-width="26" filter="url(#mbl8)" opacity="0.19"/><path d="M2520 245 C2682 291 2846 332 3000 400 L3000 200 L1800 200 Z" fill="#e4e5e4"/><g clip-path="url(#mc5)"><path d="M2520 245 C2682 291 2846 332 3000 400" fill="none" stroke="#ebecea" stroke-width="5" filter="url(#mbl3)" opacity="0.3"/></g><path d="M2680 245 C2780 265 2900 290 3000 314" fill="none" stroke="#a9aaa9" stroke-width="26" filter="url(#mbl8)" opacity="0.15"/><path d="M2680 245 C2780 265 2900 290 3000 314 L3000 200 L1800 200 Z" fill="#d9dad9"/><g clip-path="url(#mc6)"><path d="M2680 245 C2780 265 2900 290 3000 314" fill="none" stroke="#ebecea" stroke-width="5" filter="url(#mbl3)" opacity="0.3"/></g></g></svg><div style="position:absolute;left:761.8px;top:292.4px;font-size:103px;line-height:103px;color:#5a5a5a;font-weight:400;white-space:nowrap;transform:scaleX(0.8806);transform-origin:0 0;-webkit-text-stroke:2px #c6c7c6;">Sales: 2023 | Furniture</div><svg style="left:1034px;top:439px" width="994" height="779" viewBox="1034 439 994 779"><rect x="1034" y="439" width="994" height="779" fill="#ffffff"/><line x1="1151" y1="517.2" x2="2027" y2="517.2" stroke="#ececec" stroke-width="1.2" stroke-dasharray="1.6 1.6"/><text x="1141" y="523.5" font-size="17.5" fill="#777777" text-anchor="end" font-family="Liberation Sans">$1,000</text><line x1="1151" y1="572.9" x2="2027" y2="572.9" stroke="#ececec" stroke-width="1.2" stroke-dasharray="1.6 1.6"/><text x="1141" y="579.1" font-size="17.5" fill="#777777" text-anchor="end" font-family="Liberation Sans">$800</text><line x1="1151" y1="628.5" x2="2027" y2="628.5" stroke="#ececec" stroke-width="1.2" stroke-dasharray="1.6 1.6"/><text x="1141" y="634.8" font-size="17.5" fill="#777777" text-anchor="end" font-family="Liberation Sans">$600</text><line x1="1151" y1="684.2" x2="2027" y2="684.2" stroke="#ececec" stroke-width="1.2" stroke-dasharray="1.6 1.6"/><text x="1141" y="690.5" font-size="17.5" fill="#777777" text-anchor="end" font-family="Liberation Sans">$400</text><line x1="1151" y1="739.8" x2="2027" y2="739.8" stroke="#ececec" stroke-width="1.2" stroke-dasharray="1.6 1.6"/><text x="1141" y="746.1" font-size="17.5" fill="#777777" text-anchor="end" font-family="Liberation Sans">$200</text><line x1="1151" y1="795.5" x2="2027" y2="795.5" stroke="#c9c9c9" stroke-width="1.2" stroke-dasharray="1.6 1.6"/><text x="1141" y="801.8" font-size="17.5" fill="#777777" text-anchor="end" font-family="Liberation Sans">$0</text><line x1="1151" y1="851.1" x2="2027" y2="851.1" stroke="#ececec" stroke-width="1.2" stroke-dasharray="1.6 1.6"/><text x="1141" y="857.4" font-size="17.5" fill="#777777" text-anchor="end" font-family="Liberation Sans">($200)</text><line x1="1151" y1="906.8" x2="2027" y2="906.8" stroke="#ececec" stroke-width="1.2" stroke-dasharray="1.6 1.6"/><text x="1141" y="913.0" font-size="17.5" fill="#777777" text-anchor="end" font-family="Liberation Sans">($400)</text><line x1="1151" y1="962.4" x2="2027" y2="962.4" stroke="#ececec" stroke-width="1.2" stroke-dasharray="1.6 1.6"/><text x="1141" y="968.7" font-size="17.5" fill="#777777" text-anchor="end" font-family="Liberation Sans">($600)</text><line x1="1151" y1="1018.0" x2="2027" y2="1018.0" stroke="#ececec" stroke-width="1.2" stroke-dasharray="1.6 1.6"/><text x="1141" y="1024.3" font-size="17.5" fill="#777777" text-anchor="end" font-family="Liberation Sans">($800)</text><line x1="1151" y1="1073.7" x2="2027" y2="1073.7" stroke="#ececec" stroke-width="1.2" stroke-dasharray="1.6 1.6"/><text x="1141" y="1080.0" font-size="17.5" fill="#777777" text-anchor="end" font-family="Liberation Sans">($1,000)</text><line x1="1151" y1="1129.3" x2="2027" y2="1129.3" stroke="#ececec" stroke-width="1.2" stroke-dasharray="1.6 1.6"/><text x="1141" y="1135.6" font-size="17.5" fill="#777777" text-anchor="end" font-family="Liberation Sans">($1,200)</text><line x1="1196.2" y1="497" x2="1196.2" y2="1140" stroke="#d9d9d9" stroke-width="1.2" stroke-dasharray="1.6 1.6"/><text x="1196.2" y="1169.5" font-size="17" fill="#777777" text-anchor="middle" font-family="Liberation Sans">$0</text><line x1="1261.6" y1="497" x2="1261.6" y2="1140" stroke="#f0f0f0" stroke-width="1.2" stroke-dasharray="1.6 1.6"/><text x="1261.6" y="1169.5" font-size="17" fill="#777777" text-anchor="middle" font-family="Liberation Sans">$500</text><line x1="1327.0" y1="497" x2="1327.0" y2="1140" stroke="#f0f0f0" stroke-width="1.2" stroke-dasharray="1.6 1.6"/><text x="1327.0" y="1169.5" font-size="17" fill="#777777" text-anchor="middle" font-family="Liberation Sans">$1,000</text><line x1="1392.5" y1="497" x2="1392.5" y2="1140" stroke="#f0f0f0" stroke-width="1.2" stroke-dasharray="1.6 1.6"/><text x="1392.5" y="1169.5" font-size="17" fill="#777777" text-anchor="middle" font-family="Liberation Sans">$1,500</text><line x1="1457.9" y1="497" x2="1457.9" y2="1140" stroke="#f0f0f0" stroke-width="1.2" stroke-dasharray="1.6 1.6"/><text x="1457.9" y="1169.5" font-size="17" fill="#777777" text-anchor="middle" font-family="Liberation Sans">$2,000</text><line x1="1523.3" y1="497" x2="1523.3" y2="1140" stroke="#f0f0f0" stroke-width="1.2" stroke-dasharray="1.6 1.6"/><text x="1523.3" y="1169.5" font-size="17" fill="#777777" text-anchor="middle" font-family="Liberation Sans">$2,500</text><line x1="1588.7" y1="497" x2="1588.7" y2="1140" stroke="#f0f0f0" stroke-width="1.2" stroke-dasharray="1.6 1.6"/><text x="1588.7" y="1169.5" font-size="17" fill="#777777" text-anchor="middle" font-family="Liberation Sans">$3,000</text><line x1="1654.1" y1="497" x2="1654.1" y2="1140" stroke="#f0f0f0" stroke-width="1.2" stroke-dasharray="1.6 1.6"/><text x="1654.1" y="1169.5" font-size="17" fill="#777777" text-anchor="middle" font-family="Liberation Sans">$3,500</text><line x1="1719.6" y1="497" x2="1719.6" y2="1140" stroke="#f0f0f0" stroke-width="1.2" stroke-dasharray="1.6 1.6"/><text x="1719.6" y="1169.5" font-size="17" fill="#777777" text-anchor="middle" font-family="Liberation Sans">$4,000</text><line x1="1785.0" y1="497" x2="1785.0" y2="1140" stroke="#f0f0f0" stroke-width="1.2" stroke-dasharray="1.6 1.6"/><text x="1785.0" y="1169.5" font-size="17" fill="#777777" text-anchor="middle" font-family="Liberation Sans">$4,500</text><line x1="1850.4" y1="497" x2="1850.4" y2="1140" stroke="#f0f0f0" stroke-width="1.2" stroke-dasharray="1.6 1.6"/><text x="1850.4" y="1169.5" font-size="17" fill="#777777" text-anchor="middle" font-family="Liberation Sans">$5,000</text><line x1="1915.8" y1="497" x2="1915.8" y2="1140" stroke="#f0f0f0" stroke-width="1.2" stroke-dasharray="1.6 1.6"/><text x="1915.8" y="1169.5" font-size="17" fill="#777777" text-anchor="middle" font-family="Liberation Sans">$5,500</text><line x1="1981.2" y1="497" x2="1981.2" y2="1140" stroke="#f0f0f0" stroke-width="1.2" stroke-dasharray="1.6 1.6"/><text x="1981.2" y="1169.5" font-size="17" fill="#777777" text-anchor="middle" font-family="Liberation Sans">$6,000</text><line x1="1150" y1="497" x2="1150" y2="1141" stroke="#e8e8e8" stroke-width="1.5"/><line x1="1150" y1="1140.5" x2="2027" y2="1140.5" stroke="#e8e8e8" stroke-width="1.5"/><text x="1588.6" y="1205" font-size="16.5" fill="#444" font-weight="700" text-anchor="middle" font-family="Liberation Sans">Sales</text><text x="0" y="0" font-size="17.5" fill="#444" text-anchor="middle" font-family="Liberation Sans" transform="translate(1063.5 818) rotate(-90)">Profit</text><text x="1041" y="478" font-size="27" fill="#555" font-family="Liberation Sans" textLength="350" lengthAdjust="spacingAndGlyphs">Sales and Profit by Customer</text><circle cx="1509.7" cy="617.5" r="7.4" fill="#7d858b" fill-opacity="0.82"/><circle cx="1432.5" cy="648.8" r="7.4" fill="#7d858b" fill-opacity="0.82"/><circle cx="1430.9" cy="659.2" r="7.4" fill="#7d858b" fill-opacity="0.82"/><circle cx="1457.2" cy="660.4" r="7.4" fill="#737b80" fill-opacity="0.82"/><circle cx="1559.5" cy="675.2" r="7.4" fill="#9ea3a6" fill-opacity="0.82"/><circle cx="1581.1" cy="678.5" r="7.4" fill="#9ea3a6" fill-opacity="0.82"/><circle cx="1404.9" cy="694.1" r="7.4" fill="#7d858b" fill-opacity="0.82"/><circle cx="1521.6" cy="712.7" r="7.4" fill="#9ea3a6" fill-opacity="0.82"/><circle cx="1560.9" cy="718.4" r="7.4" fill="#9ea3a6" fill-opacity="0.82"/><circle cx="1575.5" cy="733.6" r="7.4" fill="#b9bdbe" fill-opacity="0.82"/><circle cx="1465.2" cy="723.0" r="7.4" fill="#9ea3a6" fill-opacity="0.82"/><circle cx="1427.5" cy="728.2" r="7.4" fill="#9ea3a6" fill-opacity="0.82"/><circle cx="1429.5" cy="749.0" r="7.4" fill="#b9bdbe" fill-opacity="0.82"/><circle cx="1483.7" cy="753.5" r="7.4" fill="#b9bdbe" fill-opacity="0.82"/><circle cx="1403.9" cy="757.5" r="7.4" fill="#b9bdbe" fill-opacity="0.82"/><circle cx="1414.9" cy="761.9" r="7.4" fill="#b9bdbe" fill-opacity="0.82"/><circle cx="1385.0" cy="759.5" r="7.4" fill="#b9bdbe" fill-opacity="0.82"/><circle cx="1389.6" cy="768.5" r="7.4" fill="#b9bdbe" fill-opacity="0.82"/><circle cx="1383.0" cy="785.1" r="7.4" fill="#d0d2d2" fill-opacity="0.82"/><circle cx="1415.5" cy="788.5" r="7.4" fill="#d0d2d2" fill-opacity="0.82"/><circle cx="1439.4" cy="784.9" r="7.4" fill="#d0d2d2" fill-opacity="0.82"/><circle cx="1410.3" cy="805.4" r="7.4" fill="#e9c4bc" fill-opacity="0.82"/><circle cx="1448.4" cy="810.4" r="7.4" fill="#e9c4bc" fill-opacity="0.82"/><circle cx="1517.6" cy="822.0" r="7.4" fill="#f0a895" fill-opacity="0.82"/><circle cx="1219.6" cy="861.0" r="7.4" fill="#a8385a" fill-opacity="0.82"/><circle cx="1260.2" cy="871.0" r="7.4" fill="#a8385a" fill-opacity="0.82"/><circle cx="1250.6" cy="878.7" r="7.4" fill="#a8385a" fill-opacity="0.82"/><circle cx="1239.7" cy="891.1" r="7.4" fill="#a8385a" fill-opacity="0.82"/><circle cx="1224.5" cy="901.2" r="7.4" fill="#a8385a" fill-opacity="0.82"/><circle cx="1240.8" cy="913.3" r="7.4" fill="#a8385a" fill-opacity="0.82"/><circle cx="1290.1" cy="925.7" r="7.4" fill="#a8385a" fill-opacity="0.82"/><circle cx="1326.6" cy="913.6" r="7.4" fill="#c74a5c" fill-opacity="0.82"/><circle cx="1383.5" cy="926.5" r="7.4" fill="#d04f58" fill-opacity="0.82"/><circle cx="1380.9" cy="935.8" r="7.4" fill="#d04f58" fill-opacity="0.82"/><circle cx="1318.5" cy="863.4" r="7.4" fill="#de6a5c" fill-opacity="0.82"/><circle cx="1333.1" cy="876.4" r="7.4" fill="#de6a5c" fill-opacity="0.82"/><circle cx="1391.0" cy="877.2" r="7.4" fill="#e8866f" fill-opacity="0.82"/><circle cx="1413.4" cy="876.4" r="7.4" fill="#e8866f" fill-opacity="0.82"/><circle cx="1381.2" cy="888.5" r="7.4" fill="#de6a5c" fill-opacity="0.82"/><circle cx="1344.7" cy="840.4" r="7.4" fill="#f0a895" fill-opacity="0.82"/><circle cx="1380.9" cy="844.3" r="7.4" fill="#f0a895" fill-opacity="0.82"/><circle cx="1298.7" cy="846.3" r="7.4" fill="#de6a5c" fill-opacity="0.82"/><circle cx="1273.1" cy="846.3" r="7.4" fill="#d04f58" fill-opacity="0.82"/><circle cx="1264.5" cy="848.2" r="7.4" fill="#d04f58" fill-opacity="0.82"/><circle cx="1255.5" cy="841.2" r="7.4" fill="#d04f58" fill-opacity="0.82"/><circle cx="1251.4" cy="828.0" r="7.4" fill="#de6a5c" fill-opacity="0.82"/><circle cx="1325.0" cy="843.0" r="7.4" fill="#e8866f" fill-opacity="0.82"/><circle cx="1314.9" cy="842.0" r="7.4" fill="#e8866f" fill-opacity="0.82"/><circle cx="1313.7" cy="834.2" r="7.4" fill="#e8866f" fill-opacity="0.82"/><circle cx="1299.4" cy="831.6" r="7.4" fill="#f0a895" fill-opacity="0.82"/><circle cx="1290.9" cy="827.2" r="7.4" fill="#e8866f" fill-opacity="0.82"/><circle cx="1368.5" cy="821.8" r="7.4" fill="#f0a895" fill-opacity="0.82"/><circle cx="1377.8" cy="825.4" r="7.4" fill="#f0a895" fill-opacity="0.82"/><circle cx="1343.2" cy="813.3" r="7.4" fill="#f0a895" fill-opacity="0.82"/><circle cx="1330.5" cy="807.8" r="7.4" fill="#eed3cc" fill-opacity="0.82"/><circle cx="1357.3" cy="803.2" r="7.4" fill="#e9c4bc" fill-opacity="0.82"/><circle cx="1376.2" cy="805.0" r="7.4" fill="#e9c4bc" fill-opacity="0.82"/><circle cx="1307.2" cy="801.6" r="7.4" fill="#eed3cc" fill-opacity="0.82"/><circle cx="1292.5" cy="804.0" r="7.4" fill="#eed3cc" fill-opacity="0.82"/><circle cx="1290.1" cy="814.0" r="7.4" fill="#f0a895" fill-opacity="0.82"/><circle cx="1277.7" cy="819.5" r="7.4" fill="#e8866f" fill-opacity="0.82"/><circle cx="1260.7" cy="814.8" r="7.4" fill="#e8866f" fill-opacity="0.82"/><circle cx="1252.9" cy="813.3" r="7.4" fill="#e8866f" fill-opacity="0.82"/><circle cx="1232.0" cy="816.4" r="7.4" fill="#de6a5c" fill-opacity="0.82"/><circle cx="1232.7" cy="824.1" r="7.4" fill="#d04f58" fill-opacity="0.82"/><circle cx="1226.5" cy="808.6" r="7.4" fill="#de6a5c" fill-opacity="0.82"/><circle cx="1218.8" cy="796.2" r="7.4" fill="#f0a895" fill-opacity="0.82"/><circle cx="1207.9" cy="836.5" r="7.4" fill="#a8385a" fill-opacity="0.82"/><circle cx="1224.2" cy="836.5" r="7.4" fill="#a8385a" fill-opacity="0.82"/><circle cx="1205.6" cy="821.8" r="7.4" fill="#a8385a" fill-opacity="0.82"/><circle cx="1221.9" cy="830.3" r="7.4" fill="#a01e40" fill-opacity="0.82"/><circle cx="1209.5" cy="811.7" r="7.4" fill="#a01e40" fill-opacity="0.82"/><circle cx="1203.3" cy="805.5" r="7.4" fill="#a01e40" fill-opacity="0.82"/><circle cx="1195.5" cy="797.8" r="7.4" fill="#a01e40" fill-opacity="0.82"/><circle cx="1273.1" cy="800.9" r="7.4" fill="#f0a895" fill-opacity="0.82"/><circle cx="1248.2" cy="802.4" r="7.4" fill="#f0a895" fill-opacity="0.82"/><circle cx="1335.1" cy="797.8" r="7.4" fill="#e9c4bc" fill-opacity="0.82"/><circle cx="1323.6" cy="712.6" r="7.4" fill="#7d858b" fill-opacity="0.82"/><circle cx="1374.8" cy="710.2" r="7.4" fill="#9ea3a6" fill-opacity="0.82"/><circle cx="1372.9" cy="718.1" r="7.4" fill="#9ea3a6" fill-opacity="0.82"/><circle cx="1312.9" cy="724.6" r="7.4" fill="#7d858b" fill-opacity="0.82"/><circle cx="1303.3" cy="734.8" r="7.4" fill="#7d858b" fill-opacity="0.82"/><circle cx="1297.2" cy="738.1" r="7.4" fill="#9ea3a6" fill-opacity="0.82"/><circle cx="1339.1" cy="720.9" r="7.4" fill="#9ea3a6" fill-opacity="0.82"/><circle cx="1344.3" cy="724.6" r="7.4" fill="#9ea3a6" fill-opacity="0.82"/><circle cx="1358.7" cy="720.9" r="7.4" fill="#9ea3a6" fill-opacity="0.82"/><circle cx="1355.4" cy="727.4" r="7.4" fill="#9ea3a6" fill-opacity="0.82"/><circle cx="1351.7" cy="734.8" r="7.4" fill="#9ea3a6" fill-opacity="0.82"/><circle cx="1358.7" cy="740.3" r="7.4" fill="#b9bdbe" fill-opacity="0.82"/><circle cx="1288.0" cy="747.7" r="7.4" fill="#9ea3a6" fill-opacity="0.82"/><circle cx="1275.1" cy="743.1" r="7.4" fill="#9ea3a6" fill-opacity="0.82"/><circle cx="1257.9" cy="738.5" r="7.4" fill="#4f5d68" fill-opacity="0.82"/><circle cx="1259.4" cy="744.0" r="7.4" fill="#4f5d68" fill-opacity="0.82"/><circle cx="1266.8" cy="749.5" r="7.4" fill="#66737b" fill-opacity="0.82"/><circle cx="1257.5" cy="755.1" r="7.4" fill="#66737b" fill-opacity="0.82"/><circle cx="1231.7" cy="761.5" r="7.4" fill="#4f5d68" fill-opacity="0.82"/><circle cx="1221.5" cy="766.1" r="7.4" fill="#4f5d68" fill-opacity="0.82"/><circle cx="1208.6" cy="781.8" r="7.4" fill="#4f5d68" fill-opacity="0.82"/><circle cx="1202.2" cy="786.5" r="7.4" fill="#4f5d68" fill-opacity="0.82"/><circle cx="1197.5" cy="792.0" r="7.4" fill="#4f5d68" fill-opacity="0.82"/><circle cx="1308.3" cy="754.1" r="7.4" fill="#b9bdbe" fill-opacity="0.82"/><circle cx="1345.6" cy="755.1" r="7.4" fill="#b9bdbe" fill-opacity="0.82"/><circle cx="1346.1" cy="762.5" r="7.4" fill="#b9bdbe" fill-opacity="0.82"/><circle cx="1322.1" cy="763.4" r="7.4" fill="#b9bdbe" fill-opacity="0.82"/><circle cx="1294.5" cy="764.3" r="7.4" fill="#b9bdbe" fill-opacity="0.82"/><circle cx="1358.1" cy="772.6" r="7.4" fill="#d0d2d2" fill-opacity="0.82"/><circle cx="1365.5" cy="772.6" r="7.4" fill="#d0d2d2" fill-opacity="0.82"/><circle cx="1300.0" cy="777.2" r="7.4" fill="#d0d2d2" fill-opacity="0.82"/><circle cx="1312.9" cy="787.4" r="7.4" fill="#d0d2d2" fill-opacity="0.82"/><circle cx="1331.4" cy="789.2" r="7.4" fill="#d0d2d2" fill-opacity="0.82"/><circle cx="1290.8" cy="788.3" r="7.4" fill="#d0d2d2" fill-opacity="0.82"/><circle cx="1244.6" cy="768.0" r="7.4" fill="#9ea3a6" fill-opacity="0.82"/><circle cx="1235.4" cy="773.5" r="7.4" fill="#9ea3a6" fill-opacity="0.82"/><circle cx="1276.0" cy="762.5" r="7.4" fill="#9ea3a6" fill-opacity="0.82"/><circle cx="1283.4" cy="769.8" r="7.4" fill="#9ea3a6" fill-opacity="0.82"/><circle cx="1264.9" cy="775.4" r="7.4" fill="#b9bdbe" fill-opacity="0.82"/><circle cx="1250.1" cy="777.2" r="7.4" fill="#b9bdbe" fill-opacity="0.82"/><circle cx="1226.2" cy="784.6" r="7.4" fill="#b9bdbe" fill-opacity="0.82"/><circle cx="1235.4" cy="788.3" r="7.4" fill="#b9bdbe" fill-opacity="0.82"/><circle cx="1322.1" cy="773.5" r="7.4" fill="#b9bdbe" fill-opacity="0.82"/><circle cx="1312.9" cy="769.8" r="7.4" fill="#b9bdbe" fill-opacity="0.82"/><circle cx="1242.8" cy="762.5" r="7.4" fill="#66737b" fill-opacity="0.82"/><circle cx="1253.8" cy="766.1" r="7.4" fill="#9ea3a6" fill-opacity="0.82"/><circle cx="1268.6" cy="760.6" r="7.4" fill="#66737b" fill-opacity="0.82"/><circle cx="1279.7" cy="756.9" r="7.4" fill="#9ea3a6" fill-opacity="0.82"/><circle cx="1290.8" cy="758.8" r="7.4" fill="#b9bdbe" fill-opacity="0.82"/><circle cx="1216.9" cy="777.2" r="7.4" fill="#66737b" fill-opacity="0.82"/><circle cx="1228.0" cy="777.2" r="7.4" fill="#9ea3a6" fill-opacity="0.82"/><circle cx="1257.5" cy="784.6" r="7.4" fill="#b9bdbe" fill-opacity="0.82"/><circle cx="1272.3" cy="784.6" r="7.4" fill="#b9bdbe" fill-opacity="0.82"/><circle cx="1281.5" cy="782.8" r="7.4" fill="#b9bdbe" fill-opacity="0.82"/><circle cx="1244.6" cy="786.5" r="7.4" fill="#d0d2d2" fill-opacity="0.82"/><circle cx="1202.2" cy="799.4" r="7.4" fill="#a01e40" fill-opacity="0.82"/><circle cx="1283.4" cy="812.3" r="7.4" fill="#e8866f" fill-opacity="0.82"/><circle cx="1250.1" cy="793.8" r="7.4" fill="#e9c4bc" fill-opacity="0.82"/><circle cx="1316.6" cy="795.7" r="7.4" fill="#e9c4bc" fill-opacity="0.82"/><circle cx="1235.4" cy="799.4" r="7.4" fill="#f0a895" fill-opacity="0.82"/><circle cx="1261.2" cy="799.4" r="7.4" fill="#e9c4bc" fill-opacity="0.82"/><circle cx="1279.7" cy="795.7" r="7.4" fill="#e9c4bc" fill-opacity="0.82"/><circle cx="1242.8" cy="804.9" r="7.4" fill="#f0a895" fill-opacity="0.82"/><circle cx="1266.8" cy="806.8" r="7.4" fill="#f0a895" fill-opacity="0.82"/><circle cx="1216.9" cy="784.6" r="7.4" fill="#9ea3a6" fill-opacity="0.82"/><circle cx="1263.1" cy="766.1" r="7.4" fill="#9ea3a6" fill-opacity="0.82"/><circle cx="1276.0" cy="777.2" r="7.4" fill="#b9bdbe" fill-opacity="0.82"/><circle cx="1290.8" cy="777.2" r="7.4" fill="#b9bdbe" fill-opacity="0.82"/><circle cx="1300.0" cy="766.1" r="7.4" fill="#b9bdbe" fill-opacity="0.82"/><circle cx="1209.5" cy="790.1" r="7.4" fill="#b9bdbe" fill-opacity="0.82"/><circle cx="1261.2" cy="790.1" r="7.4" fill="#d0d2d2" fill-opacity="0.82"/><circle cx="1305.5" cy="780.9" r="7.4" fill="#d0d2d2" fill-opacity="0.82"/><circle cx="1318.5" cy="780.9" r="7.4" fill="#d0d2d2" fill-opacity="0.82"/><circle cx="1338.8" cy="784.6" r="7.4" fill="#d0d2d2" fill-opacity="0.82"/><circle cx="1270.5" cy="755.1" r="7.4" fill="#66737b" fill-opacity="0.82"/><circle cx="1240.9" cy="799.4" r="7.4" fill="#f0a895" fill-opacity="0.82"/><circle cx="1253.8" cy="803.1" r="7.4" fill="#f0a895" fill-opacity="0.82"/><circle cx="1276.0" cy="806.8" r="7.4" fill="#e8866f" fill-opacity="0.82"/><circle cx="1283.4" cy="803.1" r="7.4" fill="#f0a895" fill-opacity="0.82"/><circle cx="1294.5" cy="808.6" r="7.4" fill="#e8866f" fill-opacity="0.82"/><circle cx="1268.6" cy="814.1" r="7.4" fill="#e8866f" fill-opacity="0.82"/><circle cx="1246.5" cy="816.0" r="7.4" fill="#e8866f" fill-opacity="0.82"/><circle cx="1235.4" cy="806.8" r="7.4" fill="#de6a5c" fill-opacity="0.82"/><circle cx="1301.8" cy="799.4" r="7.4" fill="#e9c4bc" fill-opacity="0.82"/><circle cx="1216.9" cy="803.1" r="7.4" fill="#e8866f" fill-opacity="0.82"/><circle cx="1224.3" cy="799.4" r="7.4" fill="#de6a5c" fill-opacity="0.82"/><circle cx="1213.2" cy="817.8" r="7.4" fill="#a01e40" fill-opacity="0.82"/><circle cx="1980.8" cy="533.4" r="7.4" fill="#a9adaf" fill-opacity="0.82"/><circle cx="1566.0" cy="1103.4" r="7.4" fill="#d04f58" fill-opacity="0.82"/><circle cx="1441.7" cy="1063.7" r="7.4" fill="#a8385a" fill-opacity="0.82"/><circle cx="1642.4" cy="871.0" r="7.4" fill="#f0a895" fill-opacity="0.82"/><circle cx="1666.6" cy="948.6" r="7.4" fill="#e8866f" fill-opacity="0.82"/><circle cx="1774.7" cy="969.9" r="7.4" fill="#e8866f" fill-opacity="0.82"/><circle cx="1925.9" cy="950.4" r="7.4" fill="#f0a895" fill-opacity="0.82"/><circle cx="1198.5" cy="793.5" r="7.4" fill="#c9c4c6" fill-opacity="0.9"/></svg><div class="a" style="left:2430px;top:465px;width:466px;height:205px;border-radius:40px;background:#3c7596"></div><div class="a" style="left:2430px;top:725px;width:467px;height:204px;border-radius:40px;background:#3c7596"></div><div class="a" style="left:773px;top:1240px;width:2123px;height:287px;border-radius:47px;background:#3c7596"></div><div style="position:absolute;left:2481.8px;top:501.6px;font-size:69.5px;line-height:69.5px;color:#ffffff;font-weight:400;white-space:nowrap;transform:scaleX(0.9125);transform-origin:0 0;-webkit-text-stroke:1.2px #3c7596;">$219,312.84</div><div style="position:absolute;left:2552.2px;top:581.1px;font-size:46.4px;line-height:46.4px;color:#ffffff;font-weight:400;white-space:nowrap;transform:scaleX(0.9401);transform-origin:0 0;-webkit-text-stroke:1.2px #3c7596;">Total Sales</div><div style="position:absolute;left:2518.9px;top:761.7px;font-size:68px;line-height:68px;color:#ffffff;font-weight:400;white-space:nowrap;transform:scaleX(0.9256);transform-origin:0 0;-webkit-text-stroke:1.2px #3c7596;">$3,349.24</div><div style="position:absolute;left:2552.3px;top:839.8px;font-size:45px;line-height:45px;color:#ffffff;font-weight:400;white-space:nowrap;transform:scaleX(1.0174);transform-origin:0 0;-webkit-text-stroke:1.2px #3c7596;">Total Profit</div><div style="position:absolute;left:808.3px;top:1265.3px;font-size:62px;line-height:62px;color:#ffffff;font-weight:400;white-space:nowrap;transform:scaleX(0.9464);transform-origin:0 0;-webkit-text-stroke:1.2px #3c7596;">Comments:</div></div><div class="a" style="left:692px;top:257px;width:2300px;height:1294px;border:2px solid rgba(225,226,225,0.55)"></div><div class="a" style="left:52px;top:488px;width:397.5px;height:224px;overflow:hidden;border-radius:6px"><div class="a" style="left:0;top:0;width:3184px;height:1674px;transform-origin:0 0;transform:scale(0.17268) translate(-693px,-258px)"><svg style="left:693px;top:258px" width="2302" height="1296" viewBox="693 258 2302 1296"><defs><filter id="mbl8" x="-20%" y="-20%" width="140%" height="140%"><feGaussianBlur stdDeviation="12"/></filter><filter id="mbl3" x="-20%" y="-20%" width="140%" height="140%"><feGaussianBlur stdDeviation="3"/></filter><clipPath id="msclip"><rect x="693" y="258" width="2302" height="1296"/></clipPath><clipPath id="mc0"><path d="M1850 230 C2240 464 2450 946 3000 926 L3000 200 L1800 200 Z"/></clipPath><clipPath id="mc1"><path d="M1860 230 C2192 488 2560 720 3000 737 L3000 200 L1800 200 Z"/></clipPath><clipPath id="mc2"><path d="M1870 230 C2180 498 2592 634 3000 642 L3000 200 L1800 200 Z"/></clipPath><clipPath id="mc3"><path d="M1915 230 C2162 552 2666 459 3000 556 L3000 200 L1800 200 Z"/></clipPath><clipPath id="mc4"><path d="M2380 240 C2572 354 2786 427 3000 489 L3000 200 L1800 200 Z"/></clipPath><clipPath id="mc5"><path d="M2520 245 C2682 291 2846 332 3000 400 L3000 200 L1800 200 Z"/></clipPath><clipPath id="mc6"><path d="M2680 245 C2780 265 2900 290 3000 314 L3000 200 L1800 200 Z"/></clipPath></defs><g clip-path="url(#msclip)"><rect x="693" y="258" width="2302" height="1296" fill="#c6c7c6"/><path d="M1850 230 C2240 464 2450 946 3000 926" fill="none" stroke="#a9aaa9" stroke-width="26" filter="url(#mbl8)" opacity="0.38"/><path d="M1850 230 C2240 464 2450 946 3000 926 L3000 200 L1800 200 Z" fill="#c9cac9"/><g clip-path="url(#mc0)"><path d="M1850 230 C2240 464 2450 946 3000 926" fill="none" stroke="#ebecea" stroke-width="5" filter="url(#mbl3)" opacity="0.3"/></g><path d="M1860 230 C2192 488 2560 720 3000 737" fill="none" stroke="#a9aaa9" stroke-width="26" filter="url(#mbl8)" opacity="0.34"/><path d="M1860 230 C2192 488 2560 720 3000 737 L3000 200 L1800 200 Z" fill="#cecfce"/><g clip-path="url(#mc1)"><path d="M1860 230 C2192 488 2560 720 3000 737" fill="none" stroke="#ebecea" stroke-width="5" filter="url(#mbl3)" opacity="0.3"/></g><path d="M1870 230 C2180 498 2592 634 3000 642" fill="none" stroke="#a9aaa9" stroke-width="26" filter="url(#mbl8)" opacity="0.38"/><path d="M1870 230 C2180 498 2592 634 3000 642 L3000 200 L1800 200 Z" fill="#d4d5d4"/><g clip-path="url(#mc2)"><path d="M1870 230 C2180 498 2592 634 3000 642" fill="none" stroke="#ebecea" stroke-width="5" filter="url(#mbl3)" opacity="0.3"/></g><path d="M1915 230 C2162 552 2666 459 3000 556" fill="none" stroke="#a9aaa9" stroke-width="26" filter="url(#mbl8)" opacity="0.34"/><path d="M1915 230 C2162 552 2666 459 3000 556 L3000 200 L1800 200 Z" fill="#dcdddc"/><g clip-path="url(#mc3)"><path d="M1915 230 C2162 552 2666 459 3000 556" fill="none" stroke="#ebecea" stroke-width="5" filter="url(#mbl3)" opacity="0.3"/></g><path d="M2380 240 C2572 354 2786 427 3000 489" fill="none" stroke="#a9aaa9" stroke-width="26" filter="url(#mbl8)" opacity="0.26"/><path d="M2380 240 C2572 354 2786 427 3000 489 L3000 200 L1800 200 Z" fill="#e7e8e7"/><g clip-path="url(#mc4)"><path d="M2380 240 C2572 354 2786 427 3000 489" fill="none" stroke="#ebecea" stroke-width="5" filter="url(#mbl3)" opacity="0.3"/></g><path d="M2520 245 C2682 291 2846 332 3000 400" fill="none" stroke="#a9aaa9" stroke-width="26" filter="url(#mbl8)" opacity="0.19"/><path d="M2520 245 C2682 291 2846 332 3000 400 L3000 200 L1800 200 Z" fill="#e4e5e4"/><g clip-path="url(#mc5)"><path d="M2520 245 C2682 291 2846 332 3000 400" fill="none" stroke="#ebecea" stroke-width="5" filter="url(#mbl3)" opacity="0.3"/></g><path d="M2680 245 C2780 265 2900 290 3000 314" fill="none" stroke="#a9aaa9" stroke-width="26" filter="url(#mbl8)" opacity="0.15"/><path d="M2680 245 C2780 265 2900 290 3000 314 L3000 200 L1800 200 Z" fill="#d9dad9"/><g clip-path="url(#mc6)"><path d="M2680 245 C2780 265 2900 290 3000 314" fill="none" stroke="#ebecea" stroke-width="5" filter="url(#mbl3)" opacity="0.3"/></g></g></svg><div style="position:absolute;left:761.8px;top:292.4px;font-size:103px;line-height:103px;color:#5a5a5a;font-weight:400;white-space:nowrap;transform:scaleX(0.8806);transform-origin:0 0;-webkit-text-stroke:2px #c6c7c6;">Sales: 2023 | Furniture</div><svg style="left:1034px;top:439px" width="994" height="779" viewBox="1034 439 994 779"><rect x="1034" y="439" width="994" height="779" fill="#ffffff"/><line x1="1151" y1="517.2" x2="2027" y2="517.2" stroke="#ececec" stroke-width="1.2" stroke-dasharray="1.6 1.6"/><text x="1141" y="523.5" font-size="17.5" fill="#777777" text-anchor="end" font-family="Liberation Sans">$1,000</text><line x1="1151" y1="572.9" x2="2027" y2="572.9" stroke="#ececec" stroke-width="1.2" stroke-dasharray="1.6 1.6"/><text x="1141" y="579.1" font-size="17.5" fill="#777777" text-anchor="end" font-family="Liberation Sans">$800</text><line x1="1151" y1="628.5" x2="2027" y2="628.5" stroke="#ececec" stroke-width="1.2" stroke-dasharray="1.6 1.6"/><text x="1141" y="634.8" font-size="17.5" fill="#777777" text-anchor="end" font-family="Liberation Sans">$600</text><line x1="1151" y1="684.2" x2="2027" y2="684.2" stroke="#ececec" stroke-width="1.2" stroke-dasharray="1.6 1.6"/><text x="1141" y="690.5" font-size="17.5" fill="#777777" text-anchor="end" font-family="Liberation Sans">$400</text><line x1="1151" y1="739.8" x2="2027" y2="739.8" stroke="#ececec" stroke-width="1.2" stroke-dasharray="1.6 1.6"/><text x="1141" y="746.1" font-size="17.5" fill="#777777" text-anchor="end" font-family="Liberation Sans">$200</text><line x1="1151" y1="795.5" x2="2027" y2="795.5" stroke="#c9c9c9" stroke-width="1.2" stroke-dasharray="1.6 1.6"/><text x="1141" y="801.8" font-size="17.5" fill="#777777" text-anchor="end" font-family="Liberation Sans">$0</text><line x1="1151" y1="851.1" x2="2027" y2="851.1" stroke="#ececec" stroke-width="1.2" stroke-dasharray="1.6 1.6"/><text x="1141" y="857.4" font-size="17.5" fill="#777777" text-anchor="end" font-family="Liberation Sans">($200)</text><line x1="1151" y1="906.8" x2="2027" y2="906.8" stroke="#ececec" stroke-width="1.2" stroke-dasharray="1.6 1.6"/><text x="1141" y="913.0" font-size="17.5" fill="#777777" text-anchor="end" font-family="Liberation Sans">($400)</text><line x1="1151" y1="962.4" x2="2027" y2="962.4" stroke="#ececec" stroke-width="1.2" stroke-dasharray="1.6 1.6"/><text x="1141" y="968.7" font-size="17.5" fill="#777777" text-anchor="end" font-family="Liberation Sans">($600)</text><line x1="1151" y1="1018.0" x2="2027" y2="1018.0" stroke="#ececec" stroke-width="1.2" stroke-dasharray="1.6 1.6"/><text x="1141" y="1024.3" font-size="17.5" fill="#777777" text-anchor="end" font-family="Liberation Sans">($800)</text><line x1="1151" y1="1073.7" x2="2027" y2="1073.7" stroke="#ececec" stroke-width="1.2" stroke-dasharray="1.6 1.6"/><text x="1141" y="1080.0" font-size="17.5" fill="#777777" text-anchor="end" font-family="Liberation Sans">($1,000)</text><line x1="1151" y1="1129.3" x2="2027" y2="1129.3" stroke="#ececec" stroke-width="1.2" stroke-dasharray="1.6 1.6"/><text x="1141" y="1135.6" font-size="17.5" fill="#777777" text-anchor="end" font-family="Liberation Sans">($1,200)</text><line x1="1196.2" y1="497" x2="1196.2" y2="1140" stroke="#d9d9d9" stroke-width="1.2" stroke-dasharray="1.6 1.6"/><text x="1196.2" y="1169.5" font-size="17" fill="#777777" text-anchor="middle" font-family="Liberation Sans">$0</text><line x1="1261.6" y1="497" x2="1261.6" y2="1140" stroke="#f0f0f0" stroke-width="1.2" stroke-dasharray="1.6 1.6"/><text x="1261.6" y="1169.5" font-size="17" fill="#777777" text-anchor="middle" font-family="Liberation Sans">$500</text><line x1="1327.0" y1="497" x2="1327.0" y2="1140" stroke="#f0f0f0" stroke-width="1.2" stroke-dasharray="1.6 1.6"/><text x="1327.0" y="1169.5" font-size="17" fill="#777777" text-anchor="middle" font-family="Liberation Sans">$1,000</text><line x1="1392.5" y1="497" x2="1392.5" y2="1140" stroke="#f0f0f0" stroke-width="1.2" stroke-dasharray="1.6 1.6"/><text x="1392.5" y="1169.5" font-size="17" fill="#777777" text-anchor="middle" font-family="Liberation Sans">$1,500</text><line x1="1457.9" y1="497" x2="1457.9" y2="1140" stroke="#f0f0f0" stroke-width="1.2" stroke-dasharray="1.6 1.6"/><text x="1457.9" y="1169.5" font-size="17" fill="#777777" text-anchor="middle" font-family="Liberation Sans">$2,000</text><line x1="1523.3" y1="497" x2="1523.3" y2="1140" stroke="#f0f0f0" stroke-width="1.2" stroke-dasharray="1.6 1.6"/><text x="1523.3" y="1169.5" font-size="17" fill="#777777" text-anchor="middle" font-family="Liberation Sans">$2,500</text><line x1="1588.7" y1="497" x2="1588.7" y2="1140" stroke="#f0f0f0" stroke-width="1.2" stroke-dasharray="1.6 1.6"/><text x="1588.7" y="1169.5" font-size="17" fill="#777777" text-anchor="middle" font-family="Liberation Sans">$3,000</text><line x1="1654.1" y1="497" x2="1654.1" y2="1140" stroke="#f0f0f0" stroke-width="1.2" stroke-dasharray="1.6 1.6"/><text x="1654.1" y="1169.5" font-size="17" fill="#777777" text-anchor="middle" font-family="Liberation Sans">$3,500</text><line x1="1719.6" y1="497" x2="1719.6" y2="1140" stroke="#f0f0f0" stroke-width="1.2" stroke-dasharray="1.6 1.6"/><text x="1719.6" y="1169.5" font-size="17" fill="#777777" text-anchor="middle" font-family="Liberation Sans">$4,000</text><line x1="1785.0" y1="497" x2="1785.0" y2="1140" stroke="#f0f0f0" stroke-width="1.2" stroke-dasharray="1.6 1.6"/><text x="1785.0" y="1169.5" font-size="17" fill="#777777" text-anchor="middle" font-family="Liberation Sans">$4,500</text><line x1="1850.4" y1="497" x2="1850.4" y2="1140" stroke="#f0f0f0" stroke-width="1.2" stroke-dasharray="1.6 1.6"/><text x="1850.4" y="1169.5" font-size="17" fill="#777777" text-anchor="middle" font-family="Liberation Sans">$5,000</text><line x1="1915.8" y1="497" x2="1915.8" y2="1140" stroke="#f0f0f0" stroke-width="1.2" stroke-dasharray="1.6 1.6"/><text x="1915.8" y="1169.5" font-size="17" fill="#777777" text-anchor="middle" font-family="Liberation Sans">$5,500</text><line x1="1981.2" y1="497" x2="1981.2" y2="1140" stroke="#f0f0f0" stroke-width="1.2" stroke-dasharray="1.6 1.6"/><text x="1981.2" y="1169.5" font-size="17" fill="#777777" text-anchor="middle" font-family="Liberation Sans">$6,000</text><line x1="1150" y1="497" x2="1150" y2="1141" stroke="#e8e8e8" stroke-width="1.5"/><line x1="1150" y1="1140.5" x2="2027" y2="1140.5" stroke="#e8e8e8" stroke-width="1.5"/><text x="1588.6" y="1205" font-size="16.5" fill="#444" font-weight="700" text-anchor="middle" font-family="Liberation Sans">Sales</text><text x="0" y="0" font-size="17.5" fill="#444" text-anchor="middle" font-family="Liberation Sans" transform="translate(1063.5 818) rotate(-90)">Profit</text><text x="1041" y="478" font-size="27" fill="#555" font-family="Liberation Sans" textLength="350" lengthAdjust="spacingAndGlyphs">Sales and Profit by Customer</text><circle cx="1509.7" cy="617.5" r="7.4" fill="#7d858b" fill-opacity="0.82"/><circle cx="1432.5" cy="648.8" r="7.4" fill="#7d858b" fill-opacity="0.82"/><circle cx="1430.9" cy="659.2" r="7.4" fill="#7d858b" fill-opacity="0.82"/><circle cx="1457.2" cy="660.4" r="7.4" fill="#737b80" fill-opacity="0.82"/><circle cx="1559.5" cy="675.2" r="7.4" fill="#9ea3a6" fill-opacity="0.82"/><circle cx="1581.1" cy="678.5" r="7.4" fill="#9ea3a6" fill-opacity="0.82"/><circle cx="1404.9" cy="694.1" r="7.4" fill="#7d858b" fill-opacity="0.82"/><circle cx="1521.6" cy="712.7" r="7.4" fill="#9ea3a6" fill-opacity="0.82"/><circle cx="1560.9" cy="718.4" r="7.4" fill="#9ea3a6" fill-opacity="0.82"/><circle cx="1575.5" cy="733.6" r="7.4" fill="#b9bdbe" fill-opacity="0.82"/><circle cx="1465.2" cy="723.0" r="7.4" fill="#9ea3a6" fill-opacity="0.82"/><circle cx="1427.5" cy="728.2" r="7.4" fill="#9ea3a6" fill-opacity="0.82"/><circle cx="1429.5" cy="749.0" r="7.4" fill="#b9bdbe" fill-opacity="0.82"/><circle cx="1483.7" cy="753.5" r="7.4" fill="#b9bdbe" fill-opacity="0.82"/><circle cx="1403.9" cy="757.5" r="7.4" fill="#b9bdbe" fill-opacity="0.82"/><circle cx="1414.9" cy="761.9" r="7.4" fill="#b9bdbe" fill-opacity="0.82"/><circle cx="1385.0" cy="759.5" r="7.4" fill="#b9bdbe" fill-opacity="0.82"/><circle cx="1389.6" cy="768.5" r="7.4" fill="#b9bdbe" fill-opacity="0.82"/><circle cx="1383.0" cy="785.1" r="7.4" fill="#d0d2d2" fill-opacity="0.82"/><circle cx="1415.5" cy="788.5" r="7.4" fill="#d0d2d2" fill-opacity="0.82"/><circle cx="1439.4" cy="784.9" r="7.4" fill="#d0d2d2" fill-opacity="0.82"/><circle cx="1410.3" cy="805.4" r="7.4" fill="#e9c4bc" fill-opacity="0.82"/><circle cx="1448.4" cy="810.4" r="7.4" fill="#e9c4bc" fill-opacity="0.82"/><circle cx="1517.6" cy="822.0" r="7.4" fill="#f0a895" fill-opacity="0.82"/><circle cx="1219.6" cy="861.0" r="7.4" fill="#a8385a" fill-opacity="0.82"/><circle cx="1260.2" cy="871.0" r="7.4" fill="#a8385a" fill-opacity="0.82"/><circle cx="1250.6" cy="878.7" r="7.4" fill="#a8385a" fill-opacity="0.82"/><circle cx="1239.7" cy="891.1" r="7.4" fill="#a8385a" fill-opacity="0.82"/><circle cx="1224.5" cy="901.2" r="7.4" fill="#a8385a" fill-opacity="0.82"/><circle cx="1240.8" cy="913.3" r="7.4" fill="#a8385a" fill-opacity="0.82"/><circle cx="1290.1" cy="925.7" r="7.4" fill="#a8385a" fill-opacity="0.82"/><circle cx="1326.6" cy="913.6" r="7.4" fill="#c74a5c" fill-opacity="0.82"/><circle cx="1383.5" cy="926.5" r="7.4" fill="#d04f58" fill-opacity="0.82"/><circle cx="1380.9" cy="935.8" r="7.4" fill="#d04f58" fill-opacity="0.82"/><circle cx="1318.5" cy="863.4" r="7.4" fill="#de6a5c" fill-opacity="0.82"/><circle cx="1333.1" cy="876.4" r="7.4" fill="#de6a5c" fill-opacity="0.82"/><circle cx="1391.0" cy="877.2" r="7.4" fill="#e8866f" fill-opacity="0.82"/><circle cx="1413.4" cy="876.4" r="7.4" fill="#e8866f" fill-opacity="0.82"/><circle cx="1381.2" cy="888.5" r="7.4" fill="#de6a5c" fill-opacity="0.82"/><circle cx="1344.7" cy="840.4" r="7.4" fill="#f0a895" fill-opacity="0.82"/><circle cx="1380.9" cy="844.3" r="7.4" fill="#f0a895" fill-opacity="0.82"/><circle cx="1298.7" cy="846.3" r="7.4" fill="#de6a5c" fill-opacity="0.82"/><circle cx="1273.1" cy="846.3" r="7.4" fill="#d04f58" fill-opacity="0.82"/><circle cx="1264.5" cy="848.2" r="7.4" fill="#d04f58" fill-opacity="0.82"/><circle cx="1255.5" cy="841.2" r="7.4" fill="#d04f58" fill-opacity="0.82"/><circle cx="1251.4" cy="828.0" r="7.4" fill="#de6a5c" fill-opacity="0.82"/><circle cx="1325.0" cy="843.0" r="7.4" fill="#e8866f" fill-opacity="0.82"/><circle cx="1314.9" cy="842.0" r="7.4" fill="#e8866f" fill-opacity="0.82"/><circle cx="1313.7" cy="834.2" r="7.4" fill="#e8866f" fill-opacity="0.82"/><circle cx="1299.4" cy="831.6" r="7.4" fill="#f0a895" fill-opacity="0.82"/><circle cx="1290.9" cy="827.2" r="7.4" fill="#e8866f" fill-opacity="0.82"/><circle cx="1368.5" cy="821.8" r="7.4" fill="#f0a895" fill-opacity="0.82"/><circle cx="1377.8" cy="825.4" r="7.4" fill="#f0a895" fill-opacity="0.82"/><circle cx="1343.2" cy="813.3" r="7.4" fill="#f0a895" fill-opacity="0.82"/><circle cx="1330.5" cy="807.8" r="7.4" fill="#eed3cc" fill-opacity="0.82"/><circle cx="1357.3" cy="803.2" r="7.4" fill="#e9c4bc" fill-opacity="0.82"/><circle cx="1376.2" cy="805.0" r="7.4" fill="#e9c4bc" fill-opacity="0.82"/><circle cx="1307.2" cy="801.6" r="7.4" fill="#eed3cc" fill-opacity="0.82"/><circle cx="1292.5" cy="804.0" r="7.4" fill="#eed3cc" fill-opacity="0.82"/><circle cx="1290.1" cy="814.0" r="7.4" fill="#f0a895" fill-opacity="0.82"/><circle cx="1277.7" cy="819.5" r="7.4" fill="#e8866f" fill-opacity="0.82"/><circle cx="1260.7" cy="814.8" r="7.4" fill="#e8866f" fill-opacity="0.82"/><circle cx="1252.9" cy="813.3" r="7.4" fill="#e8866f" fill-opacity="0.82"/><circle cx="1232.0" cy="816.4" r="7.4" fill="#de6a5c" fill-opacity="0.82"/><circle cx="1232.7" cy="824.1" r="7.4" fill="#d04f58" fill-opacity="0.82"/><circle cx="1226.5" cy="808.6" r="7.4" fill="#de6a5c" fill-opacity="0.82"/><circle cx="1218.8" cy="796.2" r="7.4" fill="#f0a895" fill-opacity="0.82"/><circle cx="1207.9" cy="836.5" r="7.4" fill="#a8385a" fill-opacity="0.82"/><circle cx="1224.2" cy="836.5" r="7.4" fill="#a8385a" fill-opacity="0.82"/><circle cx="1205.6" cy="821.8" r="7.4" fill="#a8385a" fill-opacity="0.82"/><circle cx="1221.9" cy="830.3" r="7.4" fill="#a01e40" fill-opacity="0.82"/><circle cx="1209.5" cy="811.7" r="7.4" fill="#a01e40" fill-opacity="0.82"/><circle cx="1203.3" cy="805.5" r="7.4" fill="#a01e40" fill-opacity="0.82"/><circle cx="1195.5" cy="797.8" r="7.4" fill="#a01e40" fill-opacity="0.82"/><circle cx="1273.1" cy="800.9" r="7.4" fill="#f0a895" fill-opacity="0.82"/><circle cx="1248.2" cy="802.4" r="7.4" fill="#f0a895" fill-opacity="0.82"/><circle cx="1335.1" cy="797.8" r="7.4" fill="#e9c4bc" fill-opacity="0.82"/><circle cx="1323.6" cy="712.6" r="7.4" fill="#7d858b" fill-opacity="0.82"/><circle cx="1374.8" cy="710.2" r="7.4" fill="#9ea3a6" fill-opacity="0.82"/><circle cx="1372.9" cy="718.1" r="7.4" fill="#9ea3a6" fill-opacity="0.82"/><circle cx="1312.9" cy="724.6" r="7.4" fill="#7d858b" fill-opacity="0.82"/><circle cx="1303.3" cy="734.8" r="7.4" fill="#7d858b" fill-opacity="0.82"/><circle cx="1297.2" cy="738.1" r="7.4" fill="#9ea3a6" fill-opacity="0.82"/><circle cx="1339.1" cy="720.9" r="7.4" fill="#9ea3a6" fill-opacity="0.82"/><circle cx="1344.3" cy="724.6" r="7.4" fill="#9ea3a6" fill-opacity="0.82"/><circle cx="1358.7" cy="720.9" r="7.4" fill="#9ea3a6" fill-opacity="0.82"/><circle cx="1355.4" cy="727.4" r="7.4" fill="#9ea3a6" fill-opacity="0.82"/><circle cx="1351.7" cy="734.8" r="7.4" fill="#9ea3a6" fill-opacity="0.82"/><circle cx="1358.7" cy="740.3" r="7.4" fill="#b9bdbe" fill-opacity="0.82"/><circle cx="1288.0" cy="747.7" r="7.4" fill="#9ea3a6" fill-opacity="0.82"/><circle cx="1275.1" cy="743.1" r="7.4" fill="#9ea3a6" fill-opacity="0.82"/><circle cx="1257.9" cy="738.5" r="7.4" fill="#4f5d68" fill-opacity="0.82"/><circle cx="1259.4" cy="744.0" r="7.4" fill="#4f5d68" fill-opacity="0.82"/><circle cx="1266.8" cy="749.5" r="7.4" fill="#66737b" fill-opacity="0.82"/><circle cx="1257.5" cy="755.1" r="7.4" fill="#66737b" fill-opacity="0.82"/><circle cx="1231.7" cy="761.5" r="7.4" fill="#4f5d68" fill-opacity="0.82"/><circle cx="1221.5" cy="766.1" r="7.4" fill="#4f5d68" fill-opacity="0.82"/><circle cx="1208.6" cy="781.8" r="7.4" fill="#4f5d68" fill-opacity="0.82"/><circle cx="1202.2" cy="786.5" r="7.4" fill="#4f5d68" fill-opacity="0.82"/><circle cx="1197.5" cy="792.0" r="7.4" fill="#4f5d68" fill-opacity="0.82"/><circle cx="1308.3" cy="754.1" r="7.4" fill="#b9bdbe" fill-opacity="0.82"/><circle cx="1345.6" cy="755.1" r="7.4" fill="#b9bdbe" fill-opacity="0.82"/><circle cx="1346.1" cy="762.5" r="7.4" fill="#b9bdbe" fill-opacity="0.82"/><circle cx="1322.1" cy="763.4" r="7.4" fill="#b9bdbe" fill-opacity="0.82"/><circle cx="1294.5" cy="764.3" r="7.4" fill="#b9bdbe" fill-opacity="0.82"/><circle cx="1358.1" cy="772.6" r="7.4" fill="#d0d2d2" fill-opacity="0.82"/><circle cx="1365.5" cy="772.6" r="7.4" fill="#d0d2d2" fill-opacity="0.82"/><circle cx="1300.0" cy="777.2" r="7.4" fill="#d0d2d2" fill-opacity="0.82"/><circle cx="1312.9" cy="787.4" r="7.4" fill="#d0d2d2" fill-opacity="0.82"/><circle cx="1331.4" cy="789.2" r="7.4" fill="#d0d2d2" fill-opacity="0.82"/><circle cx="1290.8" cy="788.3" r="7.4" fill="#d0d2d2" fill-opacity="0.82"/><circle cx="1244.6" cy="768.0" r="7.4" fill="#9ea3a6" fill-opacity="0.82"/><circle cx="1235.4" cy="773.5" r="7.4" fill="#9ea3a6" fill-opacity="0.82"/><circle cx="1276.0" cy="762.5" r="7.4" fill="#9ea3a6" fill-opacity="0.82"/><circle cx="1283.4" cy="769.8" r="7.4" fill="#9ea3a6" fill-opacity="0.82"/><circle cx="1264.9" cy="775.4" r="7.4" fill="#b9bdbe" fill-opacity="0.82"/><circle cx="1250.1" cy="777.2" r="7.4" fill="#b9bdbe" fill-opacity="0.82"/><circle cx="1226.2" cy="784.6" r="7.4" fill="#b9bdbe" fill-opacity="0.82"/><circle cx="1235.4" cy="788.3" r="7.4" fill="#b9bdbe" fill-opacity="0.82"/><circle cx="1322.1" cy="773.5" r="7.4" fill="#b9bdbe" fill-opacity="0.82"/><circle cx="1312.9" cy="769.8" r="7.4" fill="#b9bdbe" fill-opacity="0.82"/><circle cx="1242.8" cy="762.5" r="7.4" fill="#66737b" fill-opacity="0.82"/><circle cx="1253.8" cy="766.1" r="7.4" fill="#9ea3a6" fill-opacity="0.82"/><circle cx="1268.6" cy="760.6" r="7.4" fill="#66737b" fill-opacity="0.82"/><circle cx="1279.7" cy="756.9" r="7.4" fill="#9ea3a6" fill-opacity="0.82"/><circle cx="1290.8" cy="758.8" r="7.4" fill="#b9bdbe" fill-opacity="0.82"/><circle cx="1216.9" cy="777.2" r="7.4" fill="#66737b" fill-opacity="0.82"/><circle cx="1228.0" cy="777.2" r="7.4" fill="#9ea3a6" fill-opacity="0.82"/><circle cx="1257.5" cy="784.6" r="7.4" fill="#b9bdbe" fill-opacity="0.82"/><circle cx="1272.3" cy="784.6" r="7.4" fill="#b9bdbe" fill-opacity="0.82"/><circle cx="1281.5" cy="782.8" r="7.4" fill="#b9bdbe" fill-opacity="0.82"/><circle cx="1244.6" cy="786.5" r="7.4" fill="#d0d2d2" fill-opacity="0.82"/><circle cx="1202.2" cy="799.4" r="7.4" fill="#a01e40" fill-opacity="0.82"/><circle cx="1283.4" cy="812.3" r="7.4" fill="#e8866f" fill-opacity="0.82"/><circle cx="1250.1" cy="793.8" r="7.4" fill="#e9c4bc" fill-opacity="0.82"/><circle cx="1316.6" cy="795.7" r="7.4" fill="#e9c4bc" fill-opacity="0.82"/><circle cx="1235.4" cy="799.4" r="7.4" fill="#f0a895" fill-opacity="0.82"/><circle cx="1261.2" cy="799.4" r="7.4" fill="#e9c4bc" fill-opacity="0.82"/><circle cx="1279.7" cy="795.7" r="7.4" fill="#e9c4bc" fill-opacity="0.82"/><circle cx="1242.8" cy="804.9" r="7.4" fill="#f0a895" fill-opacity="0.82"/><circle cx="1266.8" cy="806.8" r="7.4" fill="#f0a895" fill-opacity="0.82"/><circle cx="1216.9" cy="784.6" r="7.4" fill="#9ea3a6" fill-opacity="0.82"/><circle cx="1263.1" cy="766.1" r="7.4" fill="#9ea3a6" fill-opacity="0.82"/><circle cx="1276.0" cy="777.2" r="7.4" fill="#b9bdbe" fill-opacity="0.82"/><circle cx="1290.8" cy="777.2" r="7.4" fill="#b9bdbe" fill-opacity="0.82"/><circle cx="1300.0" cy="766.1" r="7.4" fill="#b9bdbe" fill-opacity="0.82"/><circle cx="1209.5" cy="790.1" r="7.4" fill="#b9bdbe" fill-opacity="0.82"/><circle cx="1261.2" cy="790.1" r="7.4" fill="#d0d2d2" fill-opacity="0.82"/><circle cx="1305.5" cy="780.9" r="7.4" fill="#d0d2d2" fill-opacity="0.82"/><circle cx="1318.5" cy="780.9" r="7.4" fill="#d0d2d2" fill-opacity="0.82"/><circle cx="1338.8" cy="784.6" r="7.4" fill="#d0d2d2" fill-opacity="0.82"/><circle cx="1270.5" cy="755.1" r="7.4" fill="#66737b" fill-opacity="0.82"/><circle cx="1240.9" cy="799.4" r="7.4" fill="#f0a895" fill-opacity="0.82"/><circle cx="1253.8" cy="803.1" r="7.4" fill="#f0a895" fill-opacity="0.82"/><circle cx="1276.0" cy="806.8" r="7.4" fill="#e8866f" fill-opacity="0.82"/><circle cx="1283.4" cy="803.1" r="7.4" fill="#f0a895" fill-opacity="0.82"/><circle cx="1294.5" cy="808.6" r="7.4" fill="#e8866f" fill-opacity="0.82"/><circle cx="1268.6" cy="814.1" r="7.4" fill="#e8866f" fill-opacity="0.82"/><circle cx="1246.5" cy="816.0" r="7.4" fill="#e8866f" fill-opacity="0.82"/><circle cx="1235.4" cy="806.8" r="7.4" fill="#de6a5c" fill-opacity="0.82"/><circle cx="1301.8" cy="799.4" r="7.4" fill="#e9c4bc" fill-opacity="0.82"/><circle cx="1216.9" cy="803.1" r="7.4" fill="#e8866f" fill-opacity="0.82"/><circle cx="1224.3" cy="799.4" r="7.4" fill="#de6a5c" fill-opacity="0.82"/><circle cx="1213.2" cy="817.8" r="7.4" fill="#a01e40" fill-opacity="0.82"/><circle cx="1980.8" cy="533.4" r="7.4" fill="#a9adaf" fill-opacity="0.82"/><circle cx="1566.0" cy="1103.4" r="7.4" fill="#d04f58" fill-opacity="0.82"/><circle cx="1441.7" cy="1063.7" r="7.4" fill="#a8385a" fill-opacity="0.82"/><circle cx="1642.4" cy="871.0" r="7.4" fill="#f0a895" fill-opacity="0.82"/><circle cx="1666.6" cy="948.6" r="7.4" fill="#e8866f" fill-opacity="0.82"/><circle cx="1774.7" cy="969.9" r="7.4" fill="#e8866f" fill-opacity="0.82"/><circle cx="1925.9" cy="950.4" r="7.4" fill="#f0a895" fill-opacity="0.82"/><circle cx="1198.5" cy="793.5" r="7.4" fill="#c9c4c6" fill-opacity="0.9"/></svg><div class="a" style="left:2430px;top:465px;width:466px;height:205px;border-radius:40px;background:#3c7596"></div><div class="a" style="left:2430px;top:725px;width:467px;height:204px;border-radius:40px;background:#3c7596"></div><div class="a" style="left:773px;top:1240px;width:2123px;height:287px;border-radius:47px;background:#3c7596"></div><div style="position:absolute;left:2481.8px;top:501.6px;font-size:69.5px;line-height:69.5px;color:#ffffff;font-weight:400;white-space:nowrap;transform:scaleX(0.9125);transform-origin:0 0;-webkit-text-stroke:1.2px #3c7596;">$219,312.84</div><div style="position:absolute;left:2552.2px;top:581.1px;font-size:46.4px;line-height:46.4px;color:#ffffff;font-weight:400;white-space:nowrap;transform:scaleX(0.9401);transform-origin:0 0;-webkit-text-stroke:1.2px #3c7596;">Total Sales</div><div style="position:absolute;left:2518.9px;top:761.7px;font-size:68px;line-height:68px;color:#ffffff;font-weight:400;white-space:nowrap;transform:scaleX(0.9256);transform-origin:0 0;-webkit-text-stroke:1.2px #3c7596;">$3,349.24</div><div style="position:absolute;left:2552.3px;top:839.8px;font-size:45px;line-height:45px;color:#ffffff;font-weight:400;white-space:nowrap;transform:scaleX(1.0174);transform-origin:0 0;-webkit-text-stroke:1.2px #3c7596;">Total Profit</div><div style="position:absolute;left:808.3px;top:1265.3px;font-size:62px;line-height:62px;color:#ffffff;font-weight:400;white-space:nowrap;transform:scaleX(0.9464);transform-origin:0 0;-webkit-text-stroke:1.2px #3c7596;">Comments:</div></div></div></body></html>
